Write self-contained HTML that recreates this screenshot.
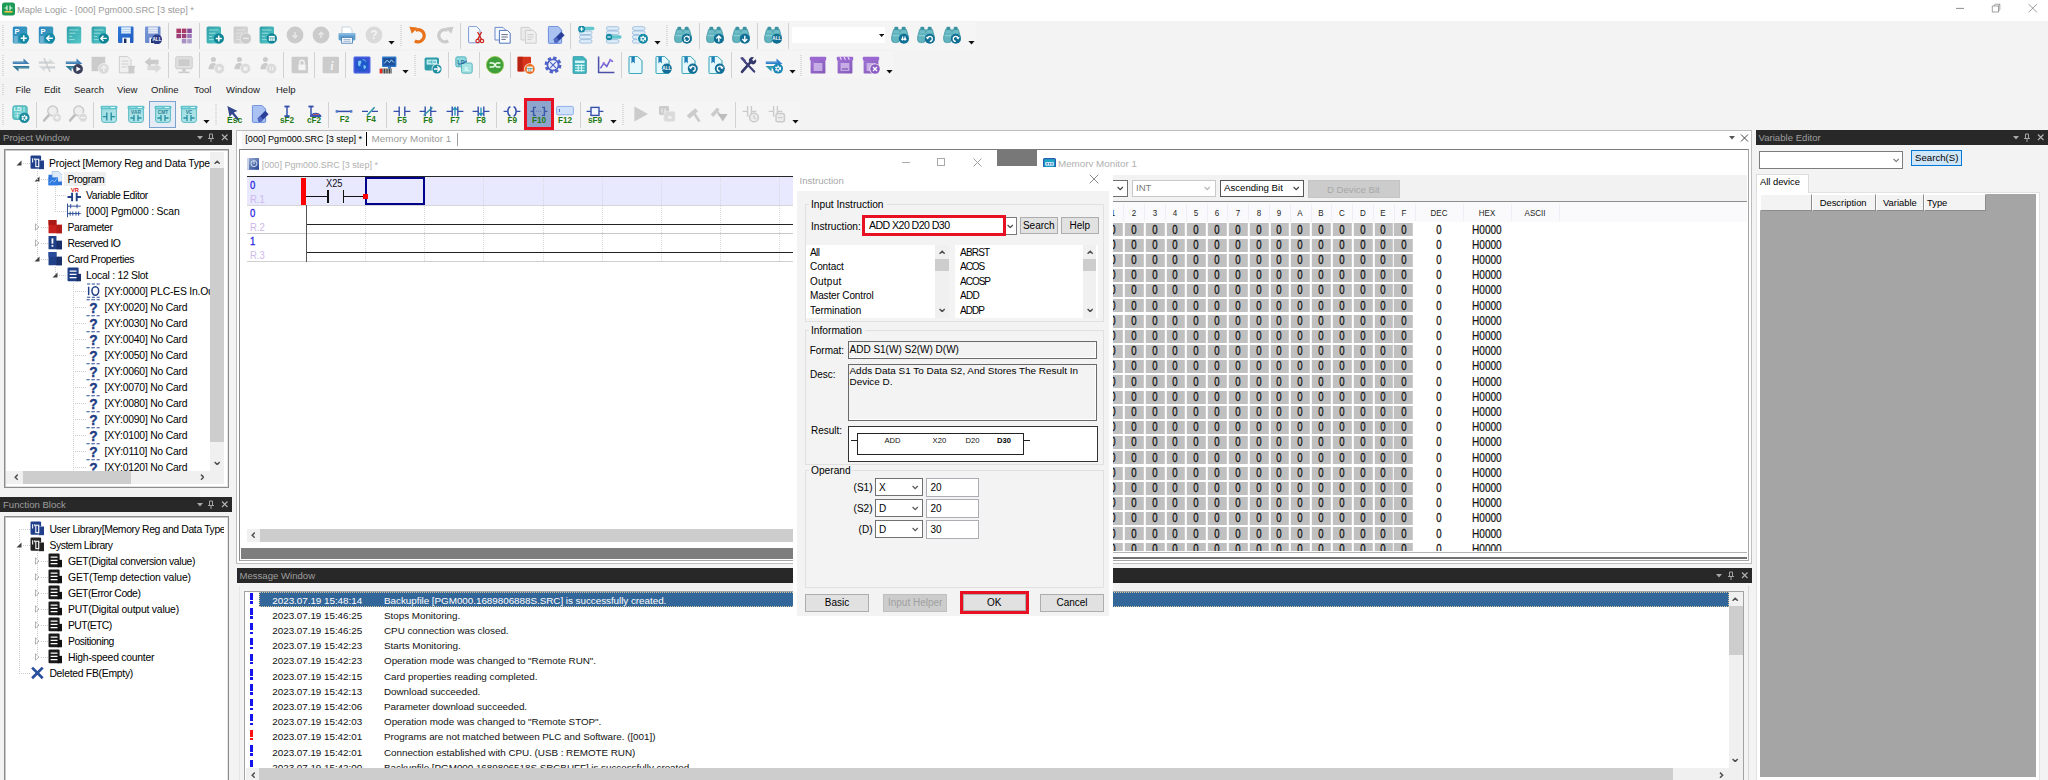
<!DOCTYPE html>
<html><head><meta charset="utf-8"><title>Maple Logic</title>
<style>
html,body{margin:0;padding:0}
body{width:2048px;height:780px;position:relative;overflow:hidden;background:#f3f3f3;font-family:"Liberation Sans",sans-serif;font-size:10px;color:#000}
div,span,svg{position:absolute;box-sizing:border-box}
span{white-space:pre}
.clip{overflow:hidden}
.hx{text-align:center;font-size:9.3px;line-height:14px;color:#1c1c1c;transform:scaleX(.86)}
.gz{width:20px;text-align:center;font-size:12px;line-height:14px;color:#111;transform:scaleX(.8);-webkit-text-stroke:.3px #111}
.gh{font-size:12px;line-height:14px;color:#111;transform:scaleX(.84);transform-origin:0 50%;-webkit-text-stroke:.2px #111}
</style></head><body>
<div style="left:0px;top:0px;width:2048px;height:20.8px;background:#fff"></div>
<svg style="left:2px;top:2px" width="13" height="14" viewBox="0 0 13 14"><rect x="0" y="0.5" width="13" height="13" rx="2.5" fill="#1d9a55"/><rect x="2.5" y="9" width="8" height="1.6" fill="#f2c14a"/><path d="M2.5 6h2.5M8 6h2.5M5 3.5v5M8 3.5v5" stroke="#e8fff0" stroke-width="1.1" fill="none"/></svg>
<span style="left:17px;top:3.2px;font-size:9.26px;color:#9a9a9a;line-height:14px;">Maple Logic - [000] Pgm000.SRC [3 step] *</span>
<svg style="left:1950px;top:0" width="98" height="20" viewBox="0 0 98 20"><path d="M6 8.4h8" stroke="#8e8e96" stroke-width="1"/><path d="M42.3 6h6.200v6h-6.200zM43.800 6l1.400-1.800h4.600v5.400l-1.300 1.600M48.500 6l1.300-1.800" stroke="#8a8a8a" stroke-width="0.8" fill="none"/><path d="M78.600 4.100l8.300 8.200M86.900 4.100l-8.300 8.200" stroke="#8a8a8a" stroke-width="0.85"/></svg>
<div style="left:0px;top:20.8px;width:2048px;height:109.2px;background:#f3f3f3"></div>
<div style="left:0px;top:22px;width:976px;height:27px;background:#f5f5f5"></div>
<div style="left:0px;top:51px;width:893px;height:27px;background:#f5f5f5"></div>
<div style="left:0px;top:101px;width:800px;height:28px;background:#f5f5f5"></div>
<span style="left:15.5px;top:83.3px;font-size:9.5px;color:#1a1a1a;line-height:14px;">File</span>
<span style="left:44px;top:83.3px;font-size:9.5px;color:#1a1a1a;line-height:14px;">Edit</span>
<span style="left:74px;top:83.3px;font-size:9.5px;color:#1a1a1a;line-height:14px;">Search</span>
<span style="left:117px;top:83.3px;font-size:9.5px;color:#1a1a1a;line-height:14px;">View</span>
<span style="left:151px;top:83.3px;font-size:9.5px;color:#1a1a1a;line-height:14px;">Online</span>
<span style="left:194px;top:83.3px;font-size:9.5px;color:#1a1a1a;line-height:14px;">Tool</span>
<span style="left:226px;top:83.3px;font-size:9.5px;color:#1a1a1a;line-height:14px;">Window</span>
<span style="left:276px;top:83.3px;font-size:9.5px;color:#1a1a1a;line-height:14px;">Help</span>
<div style="left:2.1px;top:84px;width:2.2px;height:12px;background:repeating-linear-gradient(to bottom,#dadada 0,#dadada 1px,transparent 1px,transparent 2px)"></div>
<div style="left:2.1px;top:25px;width:2.2px;height:22px;background:repeating-linear-gradient(to bottom,#dadada 0,#dadada 1px,transparent 1px,transparent 2px)"></div>
<div style="left:2.1px;top:55px;width:2.2px;height:22px;background:repeating-linear-gradient(to bottom,#dadada 0,#dadada 1px,transparent 1px,transparent 2px)"></div>
<div style="left:2.1px;top:104px;width:2.2px;height:22px;background:repeating-linear-gradient(to bottom,#dadada 0,#dadada 1px,transparent 1px,transparent 2px)"></div>
<div style="left:168px;top:22.8px;width:1px;height:26px;background:#d2d2d2"></div>
<div style="left:199px;top:22.8px;width:1px;height:26px;background:#d2d2d2"></div>
<div style="left:460px;top:22.8px;width:1px;height:26px;background:#d2d2d2"></div>
<div style="left:570px;top:22.8px;width:1px;height:26px;background:#d2d2d2"></div>
<div style="left:699px;top:22.8px;width:1px;height:26px;background:#d2d2d2"></div>
<div style="left:757px;top:22.8px;width:1px;height:26px;background:#d2d2d2"></div>
<div style="left:788px;top:22.8px;width:1px;height:26px;background:#d2d2d2"></div>
<div style="left:400.1px;top:25px;width:2.2px;height:22px;background:repeating-linear-gradient(to bottom,#dadada 0,#dadada 1px,transparent 1px,transparent 2px)"></div>
<div style="left:666.1px;top:25px;width:2.2px;height:22px;background:repeating-linear-gradient(to bottom,#dadada 0,#dadada 1px,transparent 1px,transparent 2px)"></div>
<svg style="left:388px;top:40.5px" width="7" height="4" viewBox="0 0 7 4"><path d="M0.400 0h6.200l-3.100 3.600z" fill="#111"/></svg>
<svg style="left:654px;top:40.5px" width="7" height="4" viewBox="0 0 7 4"><path d="M0.400 0h6.200l-3.100 3.600z" fill="#111"/></svg>
<svg style="left:968px;top:40.5px" width="7" height="4" viewBox="0 0 7 4"><path d="M0.400 0h6.200l-3.100 3.600z" fill="#111"/></svg>
<div style="left:792px;top:27px;width:93px;height:16px;background:#fff"></div>
<svg style="left:878.8px;top:33.6px" width="5.2" height="3" viewBox="0 0 5.2 3"><path d="M0 0h5.200l-2.600 3z" fill="#111"/></svg>
<div style="left:168px;top:51.8px;width:1px;height:26px;background:#d2d2d2"></div>
<div style="left:199px;top:51.8px;width:1px;height:26px;background:#d2d2d2"></div>
<div style="left:283px;top:51.8px;width:1px;height:26px;background:#d2d2d2"></div>
<div style="left:314px;top:51.8px;width:1px;height:26px;background:#d2d2d2"></div>
<div style="left:345px;top:51.8px;width:1px;height:26px;background:#d2d2d2"></div>
<div style="left:448px;top:51.8px;width:1px;height:26px;background:#d2d2d2"></div>
<div style="left:479px;top:51.8px;width:1px;height:26px;background:#d2d2d2"></div>
<div style="left:510px;top:51.8px;width:1px;height:26px;background:#d2d2d2"></div>
<div style="left:621px;top:51.8px;width:1px;height:26px;background:#d2d2d2"></div>
<div style="left:731px;top:51.8px;width:1px;height:26px;background:#d2d2d2"></div>
<div style="left:414.1px;top:55px;width:2.2px;height:22px;background:repeating-linear-gradient(to bottom,#dadada 0,#dadada 1px,transparent 1px,transparent 2px)"></div>
<div style="left:800.1px;top:55px;width:2.2px;height:22px;background:repeating-linear-gradient(to bottom,#dadada 0,#dadada 1px,transparent 1px,transparent 2px)"></div>
<svg style="left:402px;top:70.0px" width="7" height="4" viewBox="0 0 7 4"><path d="M0.400 0h6.200l-3.100 3.600z" fill="#111"/></svg>
<svg style="left:789px;top:70.0px" width="7" height="4" viewBox="0 0 7 4"><path d="M0.400 0h6.200l-3.100 3.600z" fill="#111"/></svg>
<svg style="left:886px;top:70.0px" width="7" height="4" viewBox="0 0 7 4"><path d="M0.400 0h6.200l-3.100 3.600z" fill="#111"/></svg>
<div style="left:36px;top:101.8px;width:1px;height:26px;background:#d2d2d2"></div>
<div style="left:93px;top:101.8px;width:1px;height:26px;background:#d2d2d2"></div>
<div style="left:328px;top:101.8px;width:1px;height:26px;background:#d2d2d2"></div>
<div style="left:386px;top:101.8px;width:1px;height:26px;background:#d2d2d2"></div>
<div style="left:496px;top:101.8px;width:1px;height:26px;background:#d2d2d2"></div>
<div style="left:580px;top:101.8px;width:1px;height:26px;background:#d2d2d2"></div>
<div style="left:735px;top:101.8px;width:1px;height:26px;background:#d2d2d2"></div>
<div style="left:215.1px;top:104px;width:2.2px;height:22px;background:repeating-linear-gradient(to bottom,#dadada 0,#dadada 1px,transparent 1px,transparent 2px)"></div>
<div style="left:622.1px;top:104px;width:2.2px;height:22px;background:repeating-linear-gradient(to bottom,#dadada 0,#dadada 1px,transparent 1px,transparent 2px)"></div>
<svg style="left:203px;top:120.0px" width="7" height="4" viewBox="0 0 7 4"><path d="M0.400 0h6.200l-3.100 3.600z" fill="#111"/></svg>
<svg style="left:610px;top:120.0px" width="7" height="4" viewBox="0 0 7 4"><path d="M0.400 0h6.200l-3.100 3.600z" fill="#111"/></svg>
<svg style="left:792px;top:120.0px" width="7" height="4" viewBox="0 0 7 4"><path d="M0.400 0h6.200l-3.100 3.600z" fill="#111"/></svg>
<div style="left:149px;top:101px;width:27px;height:27px;background:#e6ecf6;border:1px solid #7da2ce"></div>
<div style="left:524px;top:98px;width:30px;height:32px;background:#8ea6cc;border:3px solid #e81123"></div>
<svg style="left:12.0px;top:26.3px" width="18" height="18" viewBox="0 0 18 18"><defs><linearGradient id="g1" x1="0" y1="0" x2="1" y2="1"><stop offset="0" stop-color="#2a86c4"/><stop offset="1" stop-color="#3fa6b8"/></linearGradient></defs><rect x="0.8" y="0.4" width="14.4" height="17.2" rx="1.6" fill="url(#g1)"/><rect x="1.8" y="10" width="4" height="7" fill="#8fc4e0" opacity=".6"/><text x="2.6" y="8" font-size="7.5" font-weight="bold" fill="#fff" font-family="Liberation Sans,sans-serif">P</text><circle cx="11.8" cy="12.2" r="5.3" fill="#158aa6"/><path d="M8.8 12.2h6M11.8 9.2v6" stroke="#fff" stroke-width="1.5"/></svg>
<svg style="left:38.0px;top:26.3px" width="18" height="18" viewBox="0 0 18 18"><defs><linearGradient id="g2" x1="0" y1="0" x2="1" y2="1"><stop offset="0" stop-color="#2a86c4"/><stop offset="1" stop-color="#3fa6b8"/></linearGradient></defs><rect x="0.8" y="0.4" width="14.4" height="17.2" rx="1.6" fill="url(#g2)"/><rect x="1.8" y="10" width="4" height="7" fill="#8fc4e0" opacity=".6"/><text x="2.6" y="8" font-size="7.5" font-weight="bold" fill="#fff" font-family="Liberation Sans,sans-serif">P</text><circle cx="11.8" cy="12.2" r="5.3" fill="#158aa6"/><path d="M14.8 12.2h-5.5M11.5 9.5l-2.7 2.7l2.7 2.7" stroke="#fff" stroke-width="1.4" fill="none"/></svg>
<svg style="left:64.5px;top:26.3px" width="18" height="18" viewBox="0 0 18 18"><defs><linearGradient id="g3" x1="0" y1="0" x2="1" y2="1"><stop offset="0" stop-color="#2fa0a8"/><stop offset="1" stop-color="#55c8c8"/></linearGradient></defs><rect x="1.8" y="0.4" width="14.4" height="17.2" rx="1.6" fill="url(#g3)"/><path d="M4.2 4.0h9.4M4.2 7.2h6.4M4.2 10.4h3M4.2 13.6h5.4" stroke="#9ee4e4" stroke-width="1" opacity=".9"/></svg>
<svg style="left:90.5px;top:26.3px" width="18" height="18" viewBox="0 0 18 18"><defs><linearGradient id="g4" x1="0" y1="0" x2="1" y2="1"><stop offset="0" stop-color="#2fa0a8"/><stop offset="1" stop-color="#55c8c8"/></linearGradient></defs><rect x="0.6" y="0.4" width="14.4" height="17.2" rx="1.6" fill="url(#g4)"/><path d="M3.0 4.0h9.4M3.0 7.2h6.4M3.0 10.4h3M3.0 13.6h5.4" stroke="#9ee4e4" stroke-width="1" opacity=".9"/><circle cx="12.8" cy="12.4" r="5.2" fill="#0f8496"/><path d="M15.8 12.4h-5.5M12.5 9.7l-2.7 2.7l2.7 2.7" stroke="#fff" stroke-width="1.4" fill="none"/></svg>
<svg style="left:117.3px;top:26.3px" width="18" height="18" viewBox="0 0 18 18"><defs><linearGradient id="g5" x1="0" y1="0" x2="1" y2="1"><stop offset="0" stop-color="#2f78d8"/><stop offset="1" stop-color="#1f5cc0"/></linearGradient></defs><path d="M1 1.5a1 1 0 0 1 1-1h13.5a1 1 0 0 1 1 1v14.5a1 1 0 0 1-1 1h-13.5a1 1 0 0 1-1-1z" fill="url(#g5)"/><rect x="4.2" y="0.5" width="9.6" height="7.2" fill="#b8d4f0"/><path d="M4.2 2.5h9.6M4.2 4.5h9.6M4.2 6.3h9.6" stroke="#fff" stroke-width=".7" opacity=".8"/><rect x="5.4" y="11.6" width="7.6" height="5.4" fill="#f4f8ff"/><rect x="7" y="12.6" width="2.4" height="4.4" fill="#1a2a5a"/></svg>
<svg style="left:144.0px;top:26.3px" width="18" height="18" viewBox="0 0 18 18"><defs><linearGradient id="g6" x1="0" y1="0" x2="1" y2="1"><stop offset="0" stop-color="#7a98d8"/><stop offset="1" stop-color="#5f80c4"/></linearGradient></defs><path d="M1 1.5a1 1 0 0 1 1-1h13.5a1 1 0 0 1 1 1v14.5a1 1 0 0 1-1 1h-13.5a1 1 0 0 1-1-1z" fill="url(#g6)"/><rect x="4.2" y="0.5" width="9.6" height="7.2" fill="#c8d4ea"/><path d="M4.2 2.5h9.6M4.2 4.5h9.6M4.2 6.3h9.6" stroke="#fff" stroke-width=".7" opacity=".8"/><rect x="5.4" y="11.6" width="7.6" height="5.4" fill="#f4f8ff"/><rect x="7" y="12.6" width="2.4" height="4.4" fill="#1a2a5a"/><circle cx="13" cy="13.4" r="5" fill="#2a3c88"/><text x="13" y="15.0" font-size="4.6" font-weight="bold" text-anchor="middle" fill="#fff" font-family="Liberation Sans,sans-serif">ALL</text></svg>
<svg style="left:175.0px;top:26.3px" width="18" height="18" viewBox="0 0 18 18"><rect x="1.4" y="2.6" width="4.600" height="4.400" fill="#a83a68"/><rect x="6.800000000000001" y="2.6" width="4.600" height="4.400" fill="#a83a68"/><rect x="12.200000000000001" y="2.6" width="4.600" height="4.400" fill="#8a4f9c"/><rect x="1.4" y="7.800000000000001" width="4.600" height="4.400" fill="#9c3f78"/><rect x="6.800000000000001" y="7.800000000000001" width="4.600" height="4.400" fill="#9c3f78"/><rect x="12.200000000000001" y="7.800000000000001" width="4.600" height="4.400" fill="#9a78b8"/><rect x="6.800000000000001" y="13.0" width="4.600" height="4.400" fill="#a890c4"/><rect x="12.200000000000001" y="13.0" width="4.600" height="4.400" fill="#b0a4cc"/></svg>
<svg style="left:206.0px;top:26.3px" width="18" height="18" viewBox="0 0 18 18"><defs><linearGradient id="g7" x1="0" y1="0" x2="1" y2="1"><stop offset="0" stop-color="#2fa0a8"/><stop offset="1" stop-color="#55c8c8"/></linearGradient></defs><rect x="0.6" y="0.4" width="14.4" height="17.2" rx="1.6" fill="url(#g7)"/><path d="M3.0 4.0h9.4M3.0 7.2h6.4M3.0 10.4h3M3.0 13.6h5.4" stroke="#9ee4e4" stroke-width="1" opacity=".9"/><circle cx="12.8" cy="12.4" r="5.2" fill="#0f8496"/><path d="M9.8 12.4h6M12.8 9.4v6" stroke="#fff" stroke-width="1.5"/></svg>
<svg style="left:232.5px;top:26.3px" width="18" height="18" viewBox="0 0 18 18"><defs><linearGradient id="g8" x1="0" y1="0" x2="1" y2="1"><stop offset="0" stop-color="#cbcbcb"/><stop offset="1" stop-color="#dadada"/></linearGradient></defs><rect x="0.6" y="0.4" width="14.4" height="17.2" rx="1.6" fill="url(#g8)"/><path d="M3.0 4.0h9.4M3.0 7.2h6.4M3.0 10.4h3M3.0 13.6h5.4" stroke="#e4e4e4" stroke-width="1" opacity=".9"/><circle cx="12.8" cy="12.4" r="6.0" fill="#e8e8e8"/><circle cx="12.8" cy="12.4" r="5.2" fill="#cbcbcb"/><path d="M9.8 12.4h6" stroke="#ececec" stroke-width="1.5"/></svg>
<svg style="left:258.5px;top:26.3px" width="18" height="18" viewBox="0 0 18 18"><defs><linearGradient id="g9" x1="0" y1="0" x2="1" y2="1"><stop offset="0" stop-color="#2fa0a8"/><stop offset="1" stop-color="#55c8c8"/></linearGradient></defs><rect x="0.6" y="0.4" width="14.4" height="17.2" rx="1.6" fill="url(#g9)"/><path d="M3.0 4.0h9.4M3.0 7.2h6.4M3.0 10.4h3M3.0 13.6h5.4" stroke="#9ee4e4" stroke-width="1" opacity=".9"/><circle cx="12.8" cy="12.4" r="5.2" fill="#0f8496"/><rect x="9.8" y="9.9" width="6" height="5" fill="#fff"/><path d="M9.8 11.8h6M11.8 11.8v3.1M13.8 11.8v3.1" stroke="#12849a" stroke-width="0.6"/></svg>
<svg style="left:285.5px;top:26.3px" width="18" height="18" viewBox="0 0 18 18"><circle cx="9" cy="9" r="8.400" fill="#cbcbcb"/><path d="M9 6v5.5M6.5 9.3l2.5 2.5l2.5 -2.5" stroke="#e8e8e8" stroke-width="1.4" fill="none"/></svg>
<svg style="left:311.5px;top:26.3px" width="18" height="18" viewBox="0 0 18 18"><circle cx="9" cy="9" r="8.400" fill="#cbcbcb"/><path d="M9 12v-5.5M6.5 8.7l2.5 -2.5l2.5 2.5" stroke="#e8e8e8" stroke-width="1.4" fill="none"/></svg>
<svg style="left:338.0px;top:26.3px" width="18" height="18" viewBox="0 0 18 18"><path d="M4 1h7.600l2.400 2.400v4.600h-10z" fill="#fff" stroke="#9fb8d4" stroke-width=".6"/><rect x="0.600" y="7" width="16.800" height="7.400" rx="1.400" fill="#5f9fd0"/><rect x="0.600" y="7" width="16.800" height="2.200" rx="1" fill="#86b8e0"/><rect x="3.600" y="11.400" width="10.800" height="5.800" fill="#f4f8fc" stroke="#3f78b0" stroke-width=".8"/><path d="M5.400 13.600h7.200M5.400 15.300h7.200" stroke="#7a9cc0" stroke-width=".7"/></svg>
<svg style="left:364.5px;top:26.3px" width="18" height="18" viewBox="0 0 18 18"><circle cx="9" cy="9" r="8.400" fill="#dadada"/><text x="9" y="13.400" font-size="12" font-weight="bold" text-anchor="middle" fill="#f4f4f4" font-family="Liberation Sans,sans-serif">?</text></svg>
<svg style="left:409.0px;top:26.3px" width="18" height="18" viewBox="0 0 18 18"><path d="M6.400 4.200a6.100 6.100 0 1 1 -0.600 10.600" stroke="#e8731c" stroke-width="3.200" fill="none"/><path d="M0.400 0.800l7.800 0.600l-2.400 3l-3 3.400z" fill="#e8731c"/></svg>
<svg style="left:435.5px;top:26.3px" width="18" height="18" viewBox="0 0 18 18"><path d="M11.600 4.200a6.100 6.100 0 1 0 0.600 10.600" stroke="#cbcbcb" stroke-width="3.200" fill="none"/><path d="M17.600 0.800l-7.800 0.600l2.400 3l3 3.400z" fill="#cbcbcb"/></svg>
<svg style="left:467.0px;top:26.3px" width="18" height="18" viewBox="0 0 18 18"><path d="M1.600 1.200a0.800 0.800 0 0 1 0.800-0.800h7l3.600 3.600v12a0.800 0.800 0 0 1-0.800 0.800h-9.800a0.800 0.800 0 0 1-0.800-0.800z" fill="#f4f8ff" stroke="#6f8fd0" stroke-width=".9"/><path d="M10.600 6l4 7.600M14.600 6l-4 7.600" stroke="#d0281c" stroke-width="1.300"/><circle cx="10.600" cy="15" r="1.700" fill="none" stroke="#d0281c" stroke-width="1.200"/><circle cx="15" cy="15" r="1.700" fill="none" stroke="#d0281c" stroke-width="1.200"/></svg>
<svg style="left:494.0px;top:26.3px" width="18" height="18" viewBox="0 0 18 18"><path d="M1 1.400h8l2 2v10.600h-10z" fill="#f4f8ff" stroke="#5f80c8" stroke-width=".9"/><path d="M5.400 4.400h8l2.800 2.800v10h-10.800z" fill="#fbfdff" stroke="#3f68b8" stroke-width=".9"/><path d="M7.400 8.600h6.400M7.400 11h6.400M7.400 13.400h4.400" stroke="#555f78" stroke-width=".9"/></svg>
<svg style="left:520.0px;top:26.3px" width="18" height="18" viewBox="0 0 18 18"><path d="M1 1.400h8l2 2v10.600h-10z" fill="#ececec" stroke="#cbcbcb" stroke-width=".9"/><path d="M5.400 4.400h8l2.800 2.800v10h-10.800z" fill="#efefef" stroke="#cbcbcb" stroke-width=".9"/><path d="M7.400 8.600h6.400M7.400 11h6.400M7.400 13.400h4.400" stroke="#cbcbcb" stroke-width=".9"/></svg>
<svg style="left:546.5px;top:26.3px" width="18" height="18" viewBox="0 0 18 18"><path d="M1.400 1.200a0.800 0.800 0 0 1 0.800-0.800h8.800l3.600 3.600v12.600a0.800 0.800 0 0 1-0.800 0.800h-11.600a0.800 0.800 0 0 1-0.800-0.800z" fill="#a9c2f2" stroke="#5f84dc" stroke-width=".9"/><path d="M6.600 13.400l7.600-7.600l3.400 3.400l-7.600 7.600h-2.200z" fill="#2a3f9a"/><path d="M6.600 13.400l2.400-2.400l3.400 3.400l-2.400 2.400h-2.200z" fill="#4f68c4"/></svg>
<svg style="left:577.0px;top:26.3px" width="18" height="18" viewBox="0 0 18 18"><rect x="2.400" y="5.0" width="12.600" height="3.500" rx="1.700" fill="#dcecf8" stroke="#8ab0d8" stroke-width=".7"/><rect x="2.400" y="9.3" width="12.600" height="3.500" rx="1.700" fill="#dcecf8" stroke="#8ab0d8" stroke-width=".7"/><rect x="2.400" y="13.6" width="12.600" height="3.500" rx="1.700" fill="#dcecf8" stroke="#8ab0d8" stroke-width=".7"/><rect x="5" y="0.700" width="12.400" height="3.500" rx="1.700" fill="#62c6ce"/><circle cx="4.600" cy="3" r="3.500" fill="#148aa4"/><path d="M2.600 3h4M4.600 1v4" stroke="#fff" stroke-width="1.100"/></svg>
<svg style="left:603.5px;top:26.3px" width="18" height="18" viewBox="0 0 18 18"><rect x="2.400" y="0.7" width="12.600" height="3.500" rx="1.700" fill="#dcecf8" stroke="#8ab0d8" stroke-width=".7"/><rect x="2.400" y="5.0" width="12.600" height="3.500" rx="1.700" fill="#dcecf8" stroke="#8ab0d8" stroke-width=".7"/><rect x="2.400" y="13.6" width="12.600" height="3.500" rx="1.700" fill="#dcecf8" stroke="#8ab0d8" stroke-width=".7"/><rect x="4" y="9.300" width="13.600" height="3.500" rx="1.700" fill="#62c6ce"/><circle cx="5" cy="11" r="3.200" fill="#148aa4"/><path d="M3.300 11h3.400" stroke="#fff" stroke-width="1.100"/></svg>
<svg style="left:630.0px;top:26.3px" width="18" height="18" viewBox="0 0 18 18"><rect x="2.400" y="0.7" width="12.600" height="3.500" rx="1.700" fill="#dcecf8" stroke="#8ab0d8" stroke-width=".7"/><rect x="2.400" y="5.0" width="12.600" height="3.500" rx="1.700" fill="#dcecf8" stroke="#8ab0d8" stroke-width=".7"/><rect x="2.400" y="9.3" width="12.600" height="3.500" rx="1.700" fill="#dcecf8" stroke="#8ab0d8" stroke-width=".7"/><rect x="2.400" y="13.6" width="12.600" height="3.500" rx="1.700" fill="#dcecf8" stroke="#8ab0d8" stroke-width=".7"/><circle cx="13" cy="12.8" r="5.8" fill="#f3f3f3"/><circle cx="13" cy="12.8" r="5" fill="#158aa6"/><circle cx="13" cy="12.8" r="2.3" fill="none" stroke="#fff" stroke-width="1.5" stroke-dasharray="1.4 0.9"/><circle cx="13" cy="12.8" r="1.5" fill="none" stroke="#fff" stroke-width="1"/></svg>
<svg style="left:674.0px;top:26.3px" width="18" height="18" viewBox="0 0 18 18"><rect x="3.300" y="0.800" width="4" height="3.400" rx="1.200" fill="#3a92a2"/><rect x="10.700" y="0.800" width="4" height="3.400" rx="1.200" fill="#3a92a2"/><path d="M2.600 3.400h5.600l1 2h-0.400l1-2h5.600l2 7.400v2.600a3.200 3.200 0 0 1-3.200 3.200h-1.600a3.200 3.200 0 0 1-3.200-3.200v-1.400h-0.800v1.400a3.200 3.200 0 0 1-3.200 3.200h-1.600a3.200 3.200 0 0 1-3.200-3.200v-2.600z" fill="#62b4be" stroke="#3a92a2" stroke-width=".7"/><path d="M1.600 9.600h6.400M10 9.600h6.400" stroke="#8fd4da" stroke-width="1.200" opacity=".8"/><path d="M3 6h4.600M10.400 6h4.600" stroke="#8fd4da" stroke-width=".9" opacity=".7"/><circle cx="12.8" cy="12.8" r="5" fill="#106f94"/><path d="M10.200000000000001 13.4a2.6 2.6 0 0 1 4.6-2.2M15.4 12.200000000000001a2.6 2.6 0 0 1 -4.6 2.2" stroke="#fff" stroke-width="1.1" fill="none"/><path d="M15.600000000000001 9.600000000000001v2.4h-2.4zM10.0 16.0v-2.4h2.4z" fill="#fff"/></svg>
<svg style="left:706.0px;top:26.3px" width="18" height="18" viewBox="0 0 18 18"><rect x="3.300" y="0.800" width="4" height="3.400" rx="1.200" fill="#3a92a2"/><rect x="10.700" y="0.800" width="4" height="3.400" rx="1.200" fill="#3a92a2"/><path d="M2.600 3.400h5.600l1 2h-0.400l1-2h5.600l2 7.400v2.600a3.200 3.200 0 0 1-3.200 3.200h-1.600a3.200 3.200 0 0 1-3.200-3.200v-1.400h-0.800v1.400a3.200 3.200 0 0 1-3.200 3.200h-1.600a3.200 3.200 0 0 1-3.200-3.200v-2.600z" fill="#62b4be" stroke="#3a92a2" stroke-width=".7"/><path d="M1.600 9.600h6.400M10 9.600h6.400" stroke="#8fd4da" stroke-width="1.200" opacity=".8"/><path d="M3 6h4.600M10.400 6h4.600" stroke="#8fd4da" stroke-width=".9" opacity=".7"/><circle cx="12.8" cy="12.8" r="5" fill="#106f94"/><path d="M12.8 15.8v-5.5M10.3 12.5l2.5 -2.5l2.5 2.5" stroke="#fff" stroke-width="1.4" fill="none"/></svg>
<svg style="left:732.0px;top:26.3px" width="18" height="18" viewBox="0 0 18 18"><rect x="3.300" y="0.800" width="4" height="3.400" rx="1.200" fill="#3a92a2"/><rect x="10.700" y="0.800" width="4" height="3.400" rx="1.200" fill="#3a92a2"/><path d="M2.600 3.400h5.600l1 2h-0.400l1-2h5.600l2 7.400v2.600a3.200 3.200 0 0 1-3.200 3.200h-1.600a3.200 3.200 0 0 1-3.200-3.200v-1.400h-0.800v1.400a3.200 3.200 0 0 1-3.200 3.200h-1.600a3.200 3.200 0 0 1-3.200-3.200v-2.600z" fill="#62b4be" stroke="#3a92a2" stroke-width=".7"/><path d="M1.600 9.600h6.400M10 9.600h6.400" stroke="#8fd4da" stroke-width="1.200" opacity=".8"/><path d="M3 6h4.600M10.400 6h4.600" stroke="#8fd4da" stroke-width=".9" opacity=".7"/><circle cx="12.8" cy="12.8" r="5" fill="#106f94"/><path d="M12.8 9.8v5.5M10.3 13.100000000000001l2.5 2.5l2.5 -2.5" stroke="#fff" stroke-width="1.4" fill="none"/></svg>
<svg style="left:764.0px;top:26.3px" width="18" height="18" viewBox="0 0 18 18"><rect x="3.300" y="0.800" width="4" height="3.400" rx="1.200" fill="#3a92a2"/><rect x="10.700" y="0.800" width="4" height="3.400" rx="1.200" fill="#3a92a2"/><path d="M2.600 3.400h5.600l1 2h-0.400l1-2h5.600l2 7.400v2.600a3.200 3.200 0 0 1-3.200 3.200h-1.600a3.200 3.200 0 0 1-3.200-3.200v-1.400h-0.800v1.400a3.200 3.200 0 0 1-3.200 3.200h-1.600a3.200 3.200 0 0 1-3.200-3.200v-2.600z" fill="#62b4be" stroke="#3a92a2" stroke-width=".7"/><path d="M1.600 9.600h6.400M10 9.600h6.400" stroke="#8fd4da" stroke-width="1.200" opacity=".8"/><path d="M3 6h4.600M10.400 6h4.600" stroke="#8fd4da" stroke-width=".9" opacity=".7"/><circle cx="12.8" cy="12.8" r="5" fill="#106f94"/><text x="12.8" y="14.4" font-size="4.6" font-weight="bold" text-anchor="middle" fill="#fff" font-family="Liberation Sans,sans-serif">ALL</text></svg>
<svg style="left:891.0px;top:26.3px" width="18" height="18" viewBox="0 0 18 18"><rect x="3.300" y="0.800" width="4" height="3.400" rx="1.200" fill="#3a92a2"/><rect x="10.700" y="0.800" width="4" height="3.400" rx="1.200" fill="#3a92a2"/><path d="M2.600 3.400h5.600l1 2h-0.400l1-2h5.600l2 7.400v2.600a3.200 3.200 0 0 1-3.200 3.200h-1.600a3.200 3.200 0 0 1-3.200-3.200v-1.400h-0.800v1.400a3.200 3.200 0 0 1-3.200 3.200h-1.600a3.200 3.200 0 0 1-3.200-3.200v-2.600z" fill="#62b4be" stroke="#3a92a2" stroke-width=".7"/><path d="M1.600 9.600h6.400M10 9.600h6.400" stroke="#8fd4da" stroke-width="1.200" opacity=".8"/><path d="M3 6h4.600M10.400 6h4.600" stroke="#8fd4da" stroke-width=".9" opacity=".7"/><circle cx="12.8" cy="12.8" r="5" fill="#106f94"/><circle cx="11.5" cy="13.3" r="1.2" fill="#fff"/><circle cx="14.100000000000001" cy="13.3" r="1.2" fill="#fff"/><rect x="11.0" y="10.4" width="1.2" height="2.4" fill="#fff"/><rect x="13.4" y="10.4" width="1.2" height="2.4" fill="#fff"/></svg>
<svg style="left:917.0px;top:26.3px" width="18" height="18" viewBox="0 0 18 18"><rect x="3.300" y="0.800" width="4" height="3.400" rx="1.200" fill="#3a92a2"/><rect x="10.700" y="0.800" width="4" height="3.400" rx="1.200" fill="#3a92a2"/><path d="M2.600 3.400h5.600l1 2h-0.400l1-2h5.600l2 7.400v2.600a3.200 3.200 0 0 1-3.200 3.200h-1.600a3.200 3.200 0 0 1-3.200-3.200v-1.400h-0.800v1.400a3.200 3.200 0 0 1-3.200 3.200h-1.600a3.200 3.200 0 0 1-3.200-3.200v-2.600z" fill="#62b4be" stroke="#3a92a2" stroke-width=".7"/><path d="M1.600 9.600h6.400M10 9.600h6.400" stroke="#8fd4da" stroke-width="1.200" opacity=".8"/><path d="M3 6h4.600M10.400 6h4.600" stroke="#8fd4da" stroke-width=".9" opacity=".7"/><circle cx="12.8" cy="12.8" r="5" fill="#106f94"/><path d="M10.4 12.3a2.5 2.5 0 1 1 2.4 3.1" stroke="#fff" stroke-width="1.2" fill="none"/><path d="M8.8 10.8l1.6 2.6l2.2-1.8z" fill="#fff"/></svg>
<svg style="left:943.0px;top:26.3px" width="18" height="18" viewBox="0 0 18 18"><rect x="3.300" y="0.800" width="4" height="3.400" rx="1.200" fill="#3a92a2"/><rect x="10.700" y="0.800" width="4" height="3.400" rx="1.200" fill="#3a92a2"/><path d="M2.600 3.400h5.600l1 2h-0.400l1-2h5.600l2 7.400v2.600a3.200 3.200 0 0 1-3.200 3.200h-1.600a3.200 3.200 0 0 1-3.200-3.200v-1.400h-0.800v1.400a3.200 3.200 0 0 1-3.200 3.200h-1.600a3.200 3.200 0 0 1-3.200-3.200v-2.600z" fill="#62b4be" stroke="#3a92a2" stroke-width=".7"/><path d="M1.600 9.600h6.400M10 9.600h6.400" stroke="#8fd4da" stroke-width="1.200" opacity=".8"/><path d="M3 6h4.600M10.400 6h4.600" stroke="#8fd4da" stroke-width=".9" opacity=".7"/><circle cx="12.8" cy="12.8" r="5" fill="#106f94"/><path d="M15.200000000000001 12.3a2.5 2.5 0 1 0 -2.4 3.1" stroke="#fff" stroke-width="1.2" fill="none"/><path d="M16.8 10.8l-1.6 2.6l-2.2-1.8z" fill="#fff"/></svg>
<svg style="left:12.0px;top:55.8px" width="18" height="18" viewBox="0 0 18 18"><path d="M0.800 5.400h10.700v-3l6 5.600h-16.700z" fill="#3f7fb4"/><path d="M17.200 12.600h-10.700v3l-6-5.600h16.700z" fill="#2f7898"/><path d="M0.800 6.200h12M17.200 11.800h-12" stroke="#9fc8dc" stroke-width=".6" opacity=".7"/></svg>
<svg style="left:38.0px;top:55.8px" width="18" height="18" viewBox="0 0 18 18"><path d="M0.800 5.400h10.700v-3l6 5.600h-16.700z" fill="#dadada"/><path d="M17.200 12.600h-10.700v3l-6-5.600h16.700z" fill="#dadada"/><path d="M0.800 6.200h12M17.200 11.800h-12" stroke="#9fc8dc" stroke-width=".6" opacity=".7"/><path d="M6 2l6 14" stroke="#cbcbcb" stroke-width="1.400"/></svg>
<svg style="left:65.0px;top:55.8px" width="18" height="18" viewBox="0 0 18 18"><path d="M0.800 5.400h10.700v-3l6 5.600h-16.700z" fill="#3f7fb4"/><path d="M12 12.600h-5.500v3l-6-5.600h11.500z" fill="#2f7898"/><path d="M0.800 6.200h12M17.200 11.800h-12" stroke="#9fc8dc" stroke-width=".6" opacity=".7"/><circle cx="13" cy="13" r="4.9" fill="#3a3f5c"/><path d="M11.4 10.4l4.4 2.6l-4.4 2.6z" fill="#fff"/></svg>
<svg style="left:91.0px;top:55.8px" width="18" height="18" viewBox="0 0 18 18"><rect x="0.600" y="0.800" width="13.600" height="14.400" fill="#cbcbcb"/><circle cx="12.8" cy="12.8" r="5.7" fill="#f0f0f0"/><circle cx="12.8" cy="12.8" r="4.9" fill="#dadada"/><path d="M12.8 15.8v-5.5M10.3 12.5l2.5 -2.5l2.5 2.5" stroke="#f0f0f0" stroke-width="1.4" fill="none"/></svg>
<svg style="left:117.5px;top:55.8px" width="18" height="18" viewBox="0 0 18 18"><path d="M1.400 0.600h8.400l3.200 3.200v13h-11.600z" fill="#f0f0f0" stroke="#cbcbcb" stroke-width=".9"/><path d="M3.400 5h7M3.400 8h7M3.400 11h5" stroke="#cbcbcb" stroke-width=".9"/><rect x="10.400" y="11" width="6" height="6.400" fill="#cbcbcb"/><rect x="9.600" y="9.800" width="7.600" height="1.400" fill="#cbcbcb"/></svg>
<svg style="left:144.0px;top:55.8px" width="18" height="18" viewBox="0 0 18 18"><path d="M0.600 6l6-5v2.800h8v4.400h-8v2.800z" fill="#cbcbcb"/><path d="M17.400 12l-6 5v-2.800h-8v-4.400h8v-2.800z" fill="#dadada"/></svg>
<svg style="left:175.0px;top:55.8px" width="18" height="18" viewBox="0 0 18 18"><rect x="0.800" y="0.800" width="16.400" height="12" rx="1" fill="#e0e0e0" stroke="#cbcbcb" stroke-width="1"/><rect x="3.400" y="3.200" width="11.200" height="6.800" fill="#cbcbcb"/><rect x="7.400" y="12.800" width="3.200" height="3" fill="#cbcbcb"/><rect x="3.400" y="15.600" width="11.200" height="1.600" fill="#cbcbcb"/></svg>
<svg style="left:207.0px;top:55.8px" width="18" height="18" viewBox="0 0 18 18"><circle cx="6.4" cy="3.4" r="2.500" fill="#cbcbcb"/><path d="M1.400 13.200c0.200-4 2.200-6.200 5-6.200s4.800 2.200 5 6.200z" fill="#cbcbcb"/><circle cx="12.4" cy="12.6" r="5.6" fill="#f2f2f2"/><circle cx="12.4" cy="12.6" r="4.8" fill="#dadada"/><path d="M10.8 10.0l4.4 2.6l-4.4 2.6z" fill="#f2f2f2"/></svg>
<svg style="left:233.0px;top:55.8px" width="18" height="18" viewBox="0 0 18 18"><circle cx="6.4" cy="3.4" r="2.500" fill="#cbcbcb"/><path d="M1.400 13.200c0.200-4 2.200-6.200 5-6.200s4.800 2.200 5 6.200z" fill="#cbcbcb"/><circle cx="12.4" cy="12.6" r="5.6" fill="#f2f2f2"/><circle cx="12.4" cy="12.6" r="4.8" fill="#dadada"/><rect x="10.4" y="10.6" width="4" height="4" fill="#f2f2f2"/></svg>
<svg style="left:259.0px;top:55.8px" width="18" height="18" viewBox="0 0 18 18"><circle cx="6.4" cy="3.4" r="2.500" fill="#cbcbcb"/><path d="M1.400 13.200c0.200-4 2.200-6.200 5-6.200s4.800 2.200 5 6.200z" fill="#cbcbcb"/><circle cx="12.4" cy="12.6" r="5.6" fill="#f2f2f2"/><circle cx="12.4" cy="12.6" r="4.8" fill="#dadada"/><path d="M11.1 10.6v4M13.700000000000001 10.6v4" stroke="#f2f2f2" stroke-width="1.2"/></svg>
<svg style="left:290.5px;top:55.8px" width="18" height="18" viewBox="0 0 18 18"><rect x="0.600" y="0.800" width="16.400" height="16.400" rx="1" fill="#cbcbcb"/><rect x="7.400" y="8.400" width="7.200" height="5.800" fill="#f4f4f4"/><path d="M8.800 8.400v-2a2.200 2.200 0 0 1 4.400 0v2" stroke="#f4f4f4" stroke-width="1.300" fill="none"/></svg>
<svg style="left:321.5px;top:55.8px" width="18" height="18" viewBox="0 0 18 18"><rect x="0.600" y="0.800" width="16.400" height="16.400" rx="1" fill="#cbcbcb"/><text x="10" y="14" font-size="12" font-weight="bold" font-style="italic" text-anchor="middle" fill="#f4f4f4" font-family="Liberation Serif,serif">i</text></svg>
<svg style="left:352.5px;top:55.8px" width="18" height="18" viewBox="0 0 18 18"><rect x="0.800" y="0.800" width="16.400" height="16.400" rx="1" fill="#3c50d6"/><rect x="0.800" y="0.800" width="16.400" height="16.400" rx="1" fill="none" stroke="#6f8ff0" stroke-width=".8"/><circle cx="9" cy="9" r="6.600" fill="#1f58cc"/><path d="M5 5.400c1.600-1.400 3-1 3.400 0.400s-1.400 2-1 3.600s-1.600 1-2.400-0.400zM10.400 9.600c1.200-0.600 2.600 0 2.600 1.400s-1.400 2.400-2.400 1.600z" fill="#7cc4f2"/><path d="M9.600 3.600c1.400 0 2.800 0.800 3.400 2" stroke="#9ad4f8" stroke-width=".9" fill="none"/></svg>
<svg style="left:379.0px;top:55.8px" width="18" height="18" viewBox="0 0 18 18"><rect x="3" y="0.600" width="14.400" height="10.400" rx="1" fill="#2f78c8"/><rect x="4.400" y="2" width="11.600" height="7.600" fill="#1f4f9c"/><path d="M5.400 7.400l2.600-3.200l2.400 2.400l2-2.800l2.600 2.800" stroke="#9fe0f4" stroke-width="1" fill="none"/><rect x="9" y="11" width="3" height="1.600" fill="#2f78c8"/><rect x="0.600" y="12.600" width="2.600" height="4.800" fill="#e82a1c"/><path d="M4 12.600v4.800M5.600 12.600v4.800M7.200 12.600v4.800M8.800 12.600v4.800M10.400 12.600v4.800M12 12.600v4.800" stroke="#3a3a3a" stroke-width="1.100"/></svg>
<svg style="left:423.5px;top:55.8px" width="18" height="18" viewBox="0 0 18 18"><rect x="0.600" y="1.400" width="14.400" height="13" rx="1.600" fill="#2f9caa"/><rect x="2.600" y="3.600" width="10.400" height="5" fill="#bfeef0"/><path d="M4 6h3M9 6h3M7.800 4.400v3.200" stroke="#2f9caa" stroke-width=".9"/><circle cx="13" cy="13" r="5.3999999999999995" fill="#f2f2f2"/><circle cx="13" cy="13" r="4.6" fill="#1f8fa0"/><path d="M10 13h5.5M13.3 10.3l2.7 2.7l-2.7 2.7" stroke="#fff" stroke-width="1.4" fill="none"/></svg>
<svg style="left:455.0px;top:55.8px" width="18" height="18" viewBox="0 0 18 18"><rect x="0.800" y="0.800" width="10.400" height="10" rx="1.600" fill="#8fd8dc" stroke="#3fa8b4" stroke-width=".8"/><rect x="6.600" y="7" width="10.600" height="10.200" rx="1.600" fill="#a8e4e4" stroke="#3fa8b4" stroke-width=".8"/><text x="6" y="7.600" font-size="5.500" font-weight="bold" text-anchor="middle" fill="#1f6f9a" font-family="Liberation Sans,sans-serif">LD</text><text x="12" y="14.600" font-size="5.500" font-weight="bold" text-anchor="middle" fill="#e8ffff" font-family="Liberation Sans,sans-serif">IL</text><path d="M3 9.400l9 -4.400" stroke="#2a4f9a" stroke-width=".8"/></svg>
<svg style="left:486.0px;top:55.8px" width="18" height="18" viewBox="0 0 18 18"><circle cx="9" cy="9" r="8.600" fill="#3f9f3a"/><circle cx="9" cy="9" r="8.600" fill="none" stroke="#8fc43a" stroke-width="1" opacity=".7"/><path d="M3.600 7h3.400c1.400 0 2.600 4 4 4h3.400M3.600 11h3.400c1.400 0 2.600-4 4-4h3.400" stroke="#f4fff0" stroke-width="1.500" fill="none"/></svg>
<svg style="left:517.0px;top:55.8px" width="18" height="18" viewBox="0 0 18 18"><rect x="0.600" y="0.800" width="13.400" height="14.600" rx="1" fill="#d8341c"/><rect x="0.600" y="0.800" width="5" height="14.600" fill="#b82414"/><circle cx="12.8" cy="13" r="5.7" fill="#f2f2f2"/><circle cx="12.8" cy="13" r="4.9" fill="#f06a1c"/><rect x="9.8" y="10.5" width="6" height="5" fill="#fff4e8"/><path d="M9.8 12.4h6M11.8 12.4v3.1M13.8 12.4v3.1" stroke="#12849a" stroke-width="0.6"/></svg>
<svg style="left:544.0px;top:55.8px" width="18" height="18" viewBox="0 0 18 18"><circle cx="9" cy="9" r="6.600" fill="none" stroke="#4f62c8" stroke-width="3.600" stroke-dasharray="3.100 2.080"/><circle cx="9" cy="9" r="5.600" fill="#eef0fb" stroke="#4f62c8" stroke-width="1.800"/><path d="M6.200 6.200l5.600 5.600M11.800 6.200l-5.600 5.600" stroke="#4f62c8" stroke-width="1.200"/></svg>
<svg style="left:570.5px;top:55.8px" width="18" height="18" viewBox="0 0 18 18"><path d="M2 1.400a1 1 0 0 1 1-1h9l3.400 3.400v12.800a1 1 0 0 1-1 1h-11.400a1 1 0 0 1-1-1z" fill="#3fb4bc" stroke="#2794a4" stroke-width=".7"/><rect x="4" y="4.600" width="9.600" height="2.400" fill="#d8f6f6"/><path d="M4 9.400h9.600M4 12h9.600M4 14.600h9.600M7.200 8.200v7.600M10.400 8.200v7.600" stroke="#d8f6f6" stroke-width="1.100"/></svg>
<svg style="left:596.5px;top:55.8px" width="18" height="18" viewBox="0 0 18 18"><path d="M1.600 0.600v15.800h15.800" stroke="#4a4fa8" stroke-width="1.500" fill="none"/><path d="M3.400 12.400l3.400-5l3 3l3.400-6.400l2.800 1.600" stroke="#6a5fd0" stroke-width="1.500" fill="none"/><circle cx="6.800" cy="7.400" r="1.300" fill="#9a78e0"/><circle cx="13.200" cy="4" r="1.300" fill="#9a78e0"/></svg>
<svg style="left:627.0px;top:55.8px" width="18" height="18" viewBox="0 0 18 18"><path d="M2 1.400a1 1 0 0 1 1-1h7.600l4.400 4.400v11.800a1 1 0 0 1-1 1h-11a1 1 0 0 1-1-1z" fill="#e6f8fb" stroke="#2f9fb4" stroke-width="1"/><path d="M4.400 0.600h3.400v6.800l-1.700-1.700l-1.700 1.700z" fill="#1f7fb8"/></svg>
<svg style="left:653.5px;top:55.8px" width="18" height="18" viewBox="0 0 18 18"><path d="M2 1.400a1 1 0 0 1 1-1h7.600l4.400 4.400v11.800a1 1 0 0 1-1 1h-11a1 1 0 0 1-1-1z" fill="#e6f8fb" stroke="#2f9fb4" stroke-width="1"/><path d="M4.400 0.600h3.400v6.800l-1.700-1.700l-1.700 1.700z" fill="#1f7fb8"/><circle cx="12.8" cy="12.6" r="5" fill="#146f98"/><text x="12.8" y="14.2" font-size="4.6" font-weight="bold" text-anchor="middle" fill="#fff" font-family="Liberation Sans,sans-serif">ALL</text></svg>
<svg style="left:680.0px;top:55.8px" width="18" height="18" viewBox="0 0 18 18"><path d="M2 1.400a1 1 0 0 1 1-1h7.600l4.400 4.400v11.800a1 1 0 0 1-1 1h-11a1 1 0 0 1-1-1z" fill="#e6f8fb" stroke="#2f9fb4" stroke-width="1"/><path d="M4.400 0.600h3.400v6.800l-1.700-1.700l-1.700 1.700z" fill="#1f7fb8"/><circle cx="12.8" cy="12.6" r="5" fill="#146f98"/><path d="M10.4 12.1a2.5 2.5 0 1 1 2.4 3.1" stroke="#fff" stroke-width="1.2" fill="none"/><path d="M8.8 10.6l1.6 2.6l2.2-1.8z" fill="#fff"/></svg>
<svg style="left:706.5px;top:55.8px" width="18" height="18" viewBox="0 0 18 18"><path d="M2 1.400a1 1 0 0 1 1-1h7.600l4.400 4.400v11.800a1 1 0 0 1-1 1h-11a1 1 0 0 1-1-1z" fill="#e6f8fb" stroke="#2f9fb4" stroke-width="1"/><path d="M4.400 0.600h3.400v6.800l-1.700-1.700l-1.700 1.700z" fill="#1f7fb8"/><circle cx="12.8" cy="12.6" r="5" fill="#146f98"/><path d="M15.200000000000001 12.1a2.5 2.5 0 1 0 -2.4 3.1" stroke="#fff" stroke-width="1.2" fill="none"/><path d="M16.8 10.6l-1.6 2.6l-2.2-1.8z" fill="#fff"/></svg>
<svg style="left:738.5px;top:55.8px" width="18" height="18" viewBox="0 0 18 18"><path d="M3 15.800l9.400-10.600" stroke="#33386a" stroke-width="2.600" stroke-linecap="round"/><path d="M10.600 6.400a3.300 3.300 0 0 1 4.400-4.800l-2 2.200l1.400 1.400l2.200-2a3.300 3.300 0 0 1-4.800 4.400z" fill="#33386a"/><path d="M5.600 5.600l9.600 10" stroke="#3f3f7a" stroke-width="2.200" stroke-linecap="round"/><path d="M1.400 1.600l2.400-0.600l3.200 3.400l-1.800 1.800l-3.400-3.200z" fill="#4a4a86"/></svg>
<svg style="left:764.5px;top:55.8px" width="18" height="18" viewBox="0 0 18 18"><path d="M0.800 5.400h10.700v-3l6 5.600h-16.700z" fill="#2f7fd0"/><path d="M11 12.600h-4.500v3l-6-5.600h10.500z" fill="#2a98b0"/><path d="M0.800 6.200h12M17.200 11.800h-12" stroke="#9fc8dc" stroke-width=".6" opacity=".7"/><circle cx="13" cy="12.6" r="5" fill="#1a86b4"/><circle cx="13" cy="12.6" r="2.3" fill="none" stroke="#fff" stroke-width="1.5" stroke-dasharray="1.4 0.9"/><circle cx="13" cy="12.6" r="1.5" fill="none" stroke="#fff" stroke-width="1"/></svg>
<svg style="left:809.0px;top:55.8px" width="18" height="18" viewBox="0 0 18 18"><defs><linearGradient id="g10" x1="0" y1="0" x2="1" y2="1"><stop offset="0" stop-color="#a074d4"/><stop offset="1" stop-color="#8458b8"/></linearGradient></defs><rect x="1.600" y="3.600" width="14.800" height="14" rx="1.200" fill="url(#g10)"/><rect x="0.800" y="0.800" width="16.400" height="3.600" rx="1" fill="#9a68d0"/><rect x="4.600" y="7" width="8.800" height="8" fill="#d8c4f0" opacity=".75"/></svg>
<svg style="left:836.0px;top:55.8px" width="18" height="18" viewBox="0 0 18 18"><defs><linearGradient id="g11" x1="0" y1="0" x2="1" y2="1"><stop offset="0" stop-color="#a074d4"/><stop offset="1" stop-color="#8458b8"/></linearGradient></defs><rect x="1.600" y="3.600" width="14.800" height="14" rx="1.200" fill="url(#g11)"/><rect x="0.800" y="0.800" width="16.400" height="3.600" rx="1" fill="#9a68d0"/><rect x="4.600" y="7" width="8.800" height="8" fill="#d8c4f0" opacity=".75"/><path d="M4 1l1.400 2.800M8 1l1.400 2.800M12 1l1.400 2.800" stroke="#e8d8ff" stroke-width="1.200"/><path d="M6 13h6" stroke="#7a4fb0" stroke-width="1.200"/></svg>
<svg style="left:862.0px;top:55.8px" width="18" height="18" viewBox="0 0 18 18"><defs><linearGradient id="g12" x1="0" y1="0" x2="1" y2="1"><stop offset="0" stop-color="#a074d4"/><stop offset="1" stop-color="#8458b8"/></linearGradient></defs><rect x="1.600" y="3.600" width="14.800" height="14" rx="1.200" fill="url(#g12)"/><rect x="0.800" y="0.800" width="16.400" height="3.600" rx="1" fill="#9a68d0"/><rect x="4.600" y="7" width="8.800" height="8" fill="#d8c4f0" opacity=".75"/><circle cx="13" cy="13" r="5.6" fill="#f2f2f2"/><circle cx="13" cy="13" r="4.8" fill="#8a5cc4"/><path d="M11 11l4 4M15 11l-4 4" stroke="#fff" stroke-width="1.3"/></svg>
<svg style="left:11.5px;top:105.2px" width="18" height="18" viewBox="0 0 18 18"><rect x="0.800" y="0.800" width="14.400" height="13.600" rx="2" fill="#5fc8c8" stroke="#38a4ac" stroke-width=".8"/><text x="5.400" y="6.400" font-size="5.500" font-weight="bold" text-anchor="middle" fill="#f0ffff" font-family="Liberation Sans,sans-serif">LD</text><path d="M2.400 8.200h11M2.400 11h6M5.400 7.400v6M9 2v5.400M12 2v5.400" stroke="#d0f4f4" stroke-width=".8"/><circle cx="12.4" cy="12.8" r="5.2" fill="#1a8a9c"/><circle cx="12.4" cy="12.8" r="2.3" fill="none" stroke="#fff" stroke-width="1.5" stroke-dasharray="1.4 0.9"/><circle cx="12.4" cy="12.8" r="1.5" fill="none" stroke="#fff" stroke-width="1"/></svg>
<svg style="left:43.0px;top:105.2px" width="18" height="18" viewBox="0 0 18 18"><path d="M5.600 10.300l-4.600 5.200" stroke="#bdbdbd" stroke-width="2.600" stroke-linecap="round"/><circle cx="9.700" cy="5.900" r="4.900" fill="#eeeeee" stroke="#cbcbcb" stroke-width="1.500"/><circle cx="14" cy="12.600" r="4.300" fill="#dadada" stroke="#f0f0f0" stroke-width=".8"/><path d="M11.800 12.600h4.400M14 10.400v4.400" stroke="#f6f6f6" stroke-width="1.300"/></svg>
<svg style="left:69.0px;top:105.2px" width="18" height="18" viewBox="0 0 18 18"><path d="M5.600 10.300l-4.600 5.200" stroke="#bdbdbd" stroke-width="2.600" stroke-linecap="round"/><circle cx="9.700" cy="5.900" r="4.900" fill="#eeeeee" stroke="#cbcbcb" stroke-width="1.500"/><circle cx="14" cy="12.600" r="4.300" fill="#dadada" stroke="#f0f0f0" stroke-width=".8"/><path d="M11.800 12.600h4.400" stroke="#f6f6f6" stroke-width="1.300"/></svg>
<svg style="left:100.0px;top:105.2px" width="18" height="18" viewBox="0 0 18 18"><defs><linearGradient id="g13" x1="0" y1="0" x2="1" y2="1"><stop offset="0" stop-color="#9fdde2"/><stop offset="1" stop-color="#b4e6ea"/></linearGradient></defs><path d="M1.600 3.600h14.800v11.400a2.400 2.400 0 0 1-2.400 2.400h-10a2.400 2.400 0 0 1-2.400-2.400z" fill="url(#g13)" stroke="#4fb6c0" stroke-width=".9"/><rect x="0.500" y="0.800" width="17" height="3.400" rx="1.400" fill="#62c4cc"/><path d="M10.600 2.500h4.400" stroke="#dff8f8" stroke-width="1"/><path d="M2.600 2.500h6" stroke="#8fd8dc" stroke-width="1"/><path d="M2.800 11.600h4M11.200 11.600h4M6.800 7.600v8M11.200 7.600v8" stroke="#2590a0" stroke-width="1.400" fill="none"/></svg>
<svg style="left:127.0px;top:105.2px" width="18" height="18" viewBox="0 0 18 18"><defs><linearGradient id="g14" x1="0" y1="0" x2="1" y2="1"><stop offset="0" stop-color="#9fdde2"/><stop offset="1" stop-color="#b4e6ea"/></linearGradient></defs><path d="M1.600 3.600h14.800v11.400a2.400 2.400 0 0 1-2.400 2.400h-10a2.400 2.400 0 0 1-2.400-2.400z" fill="url(#g14)" stroke="#4fb6c0" stroke-width=".9"/><rect x="0.500" y="0.800" width="17" height="3.400" rx="1.400" fill="#62c4cc"/><path d="M10.600 2.500h4.400" stroke="#dff8f8" stroke-width="1"/><path d="M2.600 2.500h6" stroke="#8fd8dc" stroke-width="1"/><text x="9" y="9.200" font-size="4.800" font-weight="bold" text-anchor="middle" fill="#2a7f94" font-family="Liberation Sans,sans-serif">VAR</text><path d="M3.400 13h3.600M11 13h3.600M7 10v6M11 10v6" stroke="#2590a0" stroke-width="1.300" fill="none"/></svg>
<svg style="left:153.5px;top:105.2px" width="18" height="18" viewBox="0 0 18 18"><defs><linearGradient id="g15" x1="0" y1="0" x2="1" y2="1"><stop offset="0" stop-color="#9fdde2"/><stop offset="1" stop-color="#b4e6ea"/></linearGradient></defs><path d="M1.600 3.600h14.800v11.400a2.400 2.400 0 0 1-2.400 2.400h-10a2.400 2.400 0 0 1-2.400-2.400z" fill="url(#g15)" stroke="#4fb6c0" stroke-width=".9"/><rect x="0.500" y="0.800" width="17" height="3.400" rx="1.400" fill="#62c4cc"/><path d="M10.600 2.500h4.400" stroke="#dff8f8" stroke-width="1"/><path d="M2.600 2.500h6" stroke="#8fd8dc" stroke-width="1"/><text x="9" y="9.200" font-size="4.800" font-weight="bold" text-anchor="middle" fill="#2a7f94" font-family="Liberation Sans,sans-serif">CMT</text><path d="M3.400 13h3.600M11 13h3.600M7 10v6M11 10v6" stroke="#2590a0" stroke-width="1.300" fill="none"/></svg>
<svg style="left:180.0px;top:105.2px" width="18" height="18" viewBox="0 0 18 18"><defs><linearGradient id="g16" x1="0" y1="0" x2="1" y2="1"><stop offset="0" stop-color="#9fdde2"/><stop offset="1" stop-color="#b4e6ea"/></linearGradient></defs><path d="M1.600 3.600h14.800v11.400a2.400 2.400 0 0 1-2.400 2.400h-10a2.400 2.400 0 0 1-2.400-2.400z" fill="url(#g16)" stroke="#4fb6c0" stroke-width=".9"/><rect x="0.500" y="0.800" width="17" height="3.400" rx="1.400" fill="#62c4cc"/><path d="M10.600 2.500h4.400" stroke="#dff8f8" stroke-width="1"/><path d="M2.600 2.500h6" stroke="#8fd8dc" stroke-width="1"/><text x="9" y="9.200" font-size="4.800" font-weight="bold" text-anchor="middle" fill="#2a7f94" font-family="Liberation Sans,sans-serif">VC</text><path d="M3.400 13h3.600M11 13h3.600M7 10v6M11 10v6" stroke="#2590a0" stroke-width="1.300" fill="none"/></svg>
<svg style="left:224.5px;top:105.2px" width="18" height="18" viewBox="0 0 18 18"><path d="M2.400 1l10 5l-3.600 1.400l5.400 6.600l-1.800 1.500l-5.400-6.600l-2.400 3z" fill="#34468e"/><text x="9.6" y="17.8" font-size="8.6" font-weight="bold" text-anchor="middle" fill="#1f7a14" font-family="Liberation Sans,sans-serif">Esc</text></svg>
<svg style="left:251.0px;top:105.2px" width="18" height="18" viewBox="0 0 18 18"><path d="M1.400 1.200a0.800 0.800 0 0 1 0.800-0.800h8.800l3.600 3.600v12.600a0.800 0.800 0 0 1-0.800 0.800h-11.600a0.800 0.800 0 0 1-0.800-0.800z" fill="#a9c2f2" stroke="#5f84dc" stroke-width=".9"/><path d="M6.600 13.400l7.600-7.600l3.400 3.400l-7.600 7.600h-2.200z" fill="#2a3f9a"/><path d="M6.600 13.400l2.400-2.400l3.400 3.400l-2.400 2.400h-2.200z" fill="#4f68c4"/></svg>
<svg style="left:278.0px;top:105.2px" width="18" height="18" viewBox="0 0 18 18"><path d="M9 1.400v10" stroke="#3450ac" stroke-width="1.500"/><rect x="6.400" y="0.600" width="5.200" height="1.800" fill="#3450ac"/><rect x="6.400" y="10.200" width="5.200" height="1.800" fill="#3450ac"/><text x="9" y="17.8" font-size="8.200000000000001" font-weight="bold" text-anchor="middle" fill="#1f7a14" font-family="Liberation Sans,sans-serif">sF2</text></svg>
<svg style="left:304.5px;top:105.2px" width="18" height="18" viewBox="0 0 18 18"><path d="M6 1.400v10" stroke="#3450ac" stroke-width="1.500"/><rect x="3.400" y="0.600" width="5.200" height="1.800" fill="#3450ac"/><path d="M5 12a5.500 4 0 0 1 11.500 0z" fill="#3a54b8"/><path d="M8 9.400h6" stroke="#d05a5a" stroke-width=".9"/><text x="9" y="17.8" font-size="8.200000000000001" font-weight="bold" text-anchor="middle" fill="#1f7a14" font-family="Liberation Sans,sans-serif">cF2</text></svg>
<svg style="left:334.5px;top:105.2px" width="18" height="18" viewBox="0 0 18 18"><path d="M1 6.400h16" stroke="#3450ac" stroke-width="1.500"/><rect x="0.600" y="5.200" width="2.400" height="2.400" fill="#4f78c8"/><rect x="15" y="5.200" width="2.400" height="2.400" fill="#4f78c8"/><text x="9.5" y="17.4" font-size="8.200000000000001" font-weight="bold" text-anchor="middle" fill="#1f7a14" font-family="Liberation Sans,sans-serif">F2</text></svg>
<svg style="left:361.0px;top:105.2px" width="18" height="18" viewBox="0 0 18 18"><path d="M1 6.400h6M11 6.400h6" stroke="#3450ac" stroke-width="1.400"/><path d="M6 10.600l7.600-8.400" stroke="#2a8fa8" stroke-width="1.500"/><text x="10" y="17.4" font-size="8.200000000000001" font-weight="bold" text-anchor="middle" fill="#1f7a14" font-family="Liberation Sans,sans-serif">F4</text></svg>
<svg style="left:393.0px;top:105.2px" width="18" height="18" viewBox="0 0 18 18"><path d="M0.600 6.400h5.600M11.800 6.400h5.600M6.200 1.600v9.600M11.800 1.600v9.600" stroke="#3450ac" stroke-width="1.400" fill="none"/><text x="9" y="17.6" font-size="8.200000000000001" font-weight="bold" text-anchor="middle" fill="#1f7a14" font-family="Liberation Sans,sans-serif">F5</text></svg>
<svg style="left:419.0px;top:105.2px" width="18" height="18" viewBox="0 0 18 18"><path d="M0.600 6.400h5.600M11.800 6.400h5.600M6.200 1.600v9.600M11.800 1.600v9.600" stroke="#3450ac" stroke-width="1.400" fill="none"/><path d="M4.600 10.400l8.800-8" stroke="#2a8fa8" stroke-width="1.400"/><text x="9" y="17.6" font-size="8.200000000000001" font-weight="bold" text-anchor="middle" fill="#1f7a14" font-family="Liberation Sans,sans-serif">F6</text></svg>
<svg style="left:445.5px;top:105.2px" width="18" height="18" viewBox="0 0 18 18"><path d="M0.600 6.400h5.600M11.800 6.400h5.600M6.200 1.600v9.600M11.800 1.600v9.600" stroke="#3450ac" stroke-width="1.400" fill="none"/><path d="M9 10.400v-7.600M7.200 4.800l1.800-2.400l1.800 2.400" stroke="#1a8fb8" stroke-width="1.300" fill="none"/><text x="9" y="17.6" font-size="8.200000000000001" font-weight="bold" text-anchor="middle" fill="#1f7a14" font-family="Liberation Sans,sans-serif">F7</text></svg>
<svg style="left:472.0px;top:105.2px" width="18" height="18" viewBox="0 0 18 18"><path d="M0.600 6.400h5.600M11.800 6.400h5.600M6.200 1.600v9.600M11.800 1.600v9.600" stroke="#3450ac" stroke-width="1.400" fill="none"/><path d="M9 2.400v7.600M7.200 8l1.800 2.400l1.800-2.400" stroke="#1a8fb8" stroke-width="1.300" fill="none"/><text x="9" y="17.6" font-size="8.200000000000001" font-weight="bold" text-anchor="middle" fill="#1f7a14" font-family="Liberation Sans,sans-serif">F8</text></svg>
<svg style="left:503.0px;top:105.2px" width="18" height="18" viewBox="0 0 18 18"><path d="M0.600 6.400h4M13.400 6.400h4" stroke="#3450ac" stroke-width="1.400"/><path d="M7.400 1.600c-3.400 1.600-3.400 8 0 9.600M10.600 1.600c3.400 1.600 3.400 8 0 9.600" stroke="#3450ac" stroke-width="1.500" fill="none"/><text x="9.4" y="17.6" font-size="8.200000000000001" font-weight="bold" text-anchor="middle" fill="#1f7a14" font-family="Liberation Sans,sans-serif">F9</text></svg>
<svg style="left:529.5px;top:105.2px" width="18" height="18" viewBox="0 0 18 18"><path d="M0.600 6.400h3M14.400 6.400h3" stroke="#3a58a8" stroke-width="1.400"/><path d="M6 2.400h-2.400v8h2.400M12 2.400h2.400v8h-2.400" stroke="#3a58a8" stroke-width="1.400" fill="none"/><path d="M6 6.400h6" stroke="#6f88c4" stroke-width="1.200" stroke-dasharray="1.200 .8"/><text x="9" y="17.6" font-size="8.200000000000001" font-weight="bold" text-anchor="middle" fill="#1f7a14" font-family="Liberation Sans,sans-serif">F10</text></svg>
<svg style="left:556.0px;top:105.2px" width="18" height="18" viewBox="0 0 18 18"><rect x="0.600" y="1.400" width="16.800" height="8.400" rx="1.200" fill="#cfe0fb" stroke="#86a8e8" stroke-width=".9"/><path d="M3.400 4v3" stroke="#4f78d0" stroke-width="1"/><text x="9" y="17.6" font-size="8.200000000000001" font-weight="bold" text-anchor="middle" fill="#1f7a14" font-family="Liberation Sans,sans-serif">F12</text></svg>
<svg style="left:586.0px;top:105.2px" width="18" height="18" viewBox="0 0 18 18"><path d="M0.600 6.400h4.400M13 6.400h4.400" stroke="#3450ac" stroke-width="1.400"/><rect x="5" y="2.400" width="8" height="8" fill="#f4f8ff" stroke="#3450ac" stroke-width="1.400"/><text x="9" y="17.8" font-size="8.200000000000001" font-weight="bold" text-anchor="middle" fill="#1f7a14" font-family="Liberation Sans,sans-serif">sF9</text></svg>
<svg style="left:632.0px;top:105.2px" width="18" height="18" viewBox="0 0 18 18"><path d="M2.400 1.400l13.600 7.600l-13.600 7.600z" fill="#cbcbcb"/></svg>
<svg style="left:658.0px;top:105.2px" width="18" height="18" viewBox="0 0 18 18"><rect x="1" y="1" width="10" height="9" rx="1.400" fill="#cbcbcb"/><rect x="6" y="6.400" width="11" height="10" rx="1.400" fill="#dadada" stroke="#e8e8e8" stroke-width=".8"/><path d="M4 3.400v4M7 3.400v4" stroke="#efefef" stroke-width="1.100"/><rect x="10" y="11" width="3.600" height="2.800" fill="#efefef"/></svg>
<svg style="left:685.0px;top:105.2px" width="18" height="18" viewBox="0 0 18 18"><path d="M2 11.600l7.600-8.400l3 2.600l-7.400 8.600z" fill="#cbcbcb" transform="rotate(8 9 9)"/><path d="M8.600 5.400l7 10.400l-2.200 1.400l-7-10.400z" fill="#cbcbcb"/></svg>
<svg style="left:710.0px;top:105.2px" width="18" height="18" viewBox="0 0 18 18"><path d="M0.600 9.600l6.400-7.200l2.600 2.200l-6.200 7.400z" fill="#cbcbcb"/><path d="M7 4.400l5 6.400l-2 1.400l-5-6.400z" fill="#cbcbcb"/><path d="M8 9h9.600l-4.800 7.600z" fill="#bdbdbd"/></svg>
<svg style="left:742.0px;top:105.2px" width="18" height="18" viewBox="0 0 18 18"><path d="M0.600 6.400h5M9.400 6.400h5M5.600 1v10.800M9.400 1v10.800" stroke="#cbcbcb" stroke-width="1.400" fill="none"/><circle cx="12" cy="12.400" r="4.400" fill="#ececec" stroke="#cbcbcb" stroke-width="1.500"/><path d="M12 10v2.600l1.800 1.400" stroke="#cbcbcb" stroke-width="1.100" fill="none"/></svg>
<svg style="left:768.0px;top:105.2px" width="18" height="18" viewBox="0 0 18 18"><path d="M0.600 6.400h5M9.400 6.400h5M5.600 1v10.800M9.400 1v10.800" stroke="#cbcbcb" stroke-width="1.400" fill="none"/><rect x="8" y="8.400" width="8.400" height="8.400" rx="1.600" fill="#ececec" stroke="#cbcbcb" stroke-width="1.500"/><path d="M10 12.600h4.400" stroke="#cbcbcb" stroke-width="1.200"/></svg>
<div style="left:0px;top:130px;width:232px;height:15.4px;background:#282828"></div>
<span style="left:3px;top:130.6px;font-size:9.6px;color:#9e9e9e;line-height:14px;">Project Window</span>
<svg style="left:196px;top:133px" width="34" height="10" viewBox="0 0 34 10"><path d="M1 3h6l-3 3.4z" fill="#a8a8a8"/><path d="M13.5 1v4.5M16.5 1v4.5M13.5 1h3M12 5.5h6M15 5.5v3.5" stroke="#a4a4a4" stroke-width="1" fill="none"/><path d="M26 1.5l5.5 5.5M31.5 1.5l-5.5 5.5" stroke="#b4b4b4" stroke-width="1.1"/></svg>
<div style="left:4px;top:149px;width:225px;height:339px;background:#fff;border:1px solid #8c8c8c;box-shadow:inset 1px 1px 0 #c8c8c8,inset -1px -1px 0 #e4e4e4"></div>
<div style="left:210px;top:152px;width:14px;height:319px;background:#f0f0f0"></div>
<div style="left:210px;top:168px;width:14px;height:274px;background:#cdcdcd"></div>
<svg style="left:213.8px;top:159.6px" width="6.4" height="4.8" viewBox="0 0 6.4 4.8"><path d="M0.6 3.8L3.2 1.2L5.8 3.8" stroke="#505050" stroke-width="1.5" fill="none"/></svg>
<svg style="left:213.8px;top:460.6px" width="6.4" height="4.8" viewBox="0 0 6.4 4.8"><path d="M0.6 1L3.2 3.6L5.8 1" stroke="#505050" stroke-width="1.5" fill="none"/></svg>
<div style="left:6px;top:471px;width:218px;height:13px;background:#f0f0f0"></div>
<div style="left:22.5px;top:471px;width:108px;height:13px;background:#cdcdcd"></div>
<svg style="left:13.6px;top:474.3px" width="4.8" height="6.4" viewBox="0 0 4.8 6.4"><path d="M3.8 0.6L1.2 3.2L3.8 5.8" stroke="#505050" stroke-width="1.5" fill="none"/></svg>
<svg style="left:199.6px;top:474.3px" width="4.8" height="6.4" viewBox="0 0 4.8 6.4"><path d="M1 0.6L3.6 3.2L1 5.8" stroke="#505050" stroke-width="1.5" fill="none"/></svg>
<div style="left:210px;top:471px;width:14px;height:13px;background:#f0f0f0"></div>
<div class="clip" style="left:6px;top:152px;width:204px;height:319px">
<span style="left:43px;top:5.1px;font-size:10.4px;color:#000;line-height:14px;letter-spacing:-0.212px;">Project [Memory Reg and Data Type</span>
<svg style="left:23.7px;top:3.4px" width="14.8" height="14.8" viewBox="0 0 14 14"><rect x="0.500" y="0.500" width="10" height="12.500" rx="1" fill="#1f3f8a"/><rect x="8" y="5" width="5.500" height="8.500" fill="#1f3f8a"/><rect x="8" y="5" width="5.500" height="8.500" fill="none" stroke="#fff" stroke-width=".5" opacity=".6"/><path d="M2.500 3v4M4.500 3v2" stroke="#fff" stroke-width="1"/><rect x="5.500" y="4" width="2.800" height="7" fill="none" stroke="#fff" stroke-width="1"/></svg>
<div style="left:17px;top:11px;width:7px;height:1px;background:repeating-linear-gradient(to right,#cdcdcd 0,#cdcdcd 1px,transparent 1px,transparent 2px)"></div>
<svg style="left:10px;top:8px" width="6" height="6" viewBox="0 0 6 6"><path d="M5.5 0.5v5h-5z" fill="#404040"/></svg>
<div style="left:58px;top:20px;width:42px;height:14px;background:#f0f0f0"></div>
<span style="left:61.5px;top:21.1px;font-size:10.4px;color:#000;line-height:14px;letter-spacing:-0.454px;">Program</span>
<svg style="left:41.7px;top:19.4px" width="14.8" height="14.8" viewBox="0 0 14 14"><path d="M0.500 3.500h9l4 3v7h-13z" fill="#2f74d8"/><path d="M4 0.500h6l3.500 3.500v6h-9.500z" fill="#dfeaf8" stroke="#8fb0e0" stroke-width=".6"/><path d="M0.500 6h9v7.500h-9z" fill="#2f7ae0"/><path d="M1.500 11.500l2.500-3l2 2l2.500-3.500" stroke="#8fc0f8" stroke-width=".9" fill="none"/></svg>
<div style="left:35px;top:27px;width:7px;height:1px;background:repeating-linear-gradient(to right,#cdcdcd 0,#cdcdcd 1px,transparent 1px,transparent 2px)"></div>
<svg style="left:28px;top:24px" width="6" height="6" viewBox="0 0 6 6"><path d="M5.5 0.5v5h-5z" fill="#404040"/></svg>
<span style="left:80px;top:37.1px;font-size:10.4px;color:#000;line-height:14px;letter-spacing:-0.363px;">Variable Editor</span>
<svg style="left:60.7px;top:35.4px" width="14.8" height="14.8" viewBox="0 0 14 14"><text x="7.500" y="4.600" font-size="5.400" font-weight="bold" text-anchor="middle" fill="#e01010" font-family="Liberation Sans,sans-serif">VR</text><path d="M0.500 9.500h4M9.500 9.500h4M4.800 5.500v8M9.200 5.500v8" stroke="#1f3f86" stroke-width="1.800" fill="none"/></svg>
<div style="left:49px;top:43px;width:12px;height:1px;background:repeating-linear-gradient(to right,#cdcdcd 0,#cdcdcd 1px,transparent 1px,transparent 2px)"></div>
<span style="left:80px;top:53.1px;font-size:10.4px;color:#000;line-height:14px;letter-spacing:-0.185px;">[000] Pgm000 : Scan</span>
<svg style="left:60.7px;top:51.4px" width="14.8" height="14.8" viewBox="0 0 14 14"><path d="M0.500 0.500v13M0.500 3h12.500M3.500 1v4M9.500 1v4M0.500 10h12.500M3 8v4M5.500 8v4M8.500 8v4M11 8v4" stroke="#2a4a94" stroke-width=".9" fill="none"/></svg>
<div style="left:49px;top:59px;width:12px;height:1px;background:repeating-linear-gradient(to right,#cdcdcd 0,#cdcdcd 1px,transparent 1px,transparent 2px)"></div>
<span style="left:61.5px;top:69.1px;font-size:10.4px;color:#000;line-height:14px;letter-spacing:-0.394px;">Parameter</span>
<svg style="left:41.7px;top:67.4px" width="14.8" height="14.8" viewBox="0 0 14 14"><path d="M0.500 1h7.500v4.500h5.500v8h-13z" fill="#c8201c"/><path d="M0.500 1h7.500v4.500h-7.500z" fill="#a81814"/><path d="M8 5.500h5.500v8h-5.500z" fill="#b01c18"/></svg>
<div style="left:35px;top:75px;width:7px;height:1px;background:repeating-linear-gradient(to right,#cdcdcd 0,#cdcdcd 1px,transparent 1px,transparent 2px)"></div>
<svg style="left:29px;top:71px" width="5" height="8" viewBox="0 0 5 8"><path d="M0.5 0.8L4 4L0.5 7.2z" fill="#fff" stroke="#a0a0a0" stroke-width="0.8"/></svg>
<span style="left:61.5px;top:85.1px;font-size:10.4px;color:#000;line-height:14px;letter-spacing:-0.489px;">Reserved IO</span>
<svg style="left:41.7px;top:83.4px" width="14.8" height="14.8" viewBox="0 0 14 14"><path d="M0.500 1h7.500v4.500h5.500v8h-13z" fill="#1f3f86"/><path d="M8 5.500h5.500v8h-5.500z" fill="#18306c"/><path d="M4.200 3.200v5" stroke="#fff" stroke-width="1.700"/><rect x="3.350" y="9.400" width="1.700" height="1.700" fill="#fff"/></svg>
<div style="left:35px;top:91px;width:7px;height:1px;background:repeating-linear-gradient(to right,#cdcdcd 0,#cdcdcd 1px,transparent 1px,transparent 2px)"></div>
<svg style="left:29px;top:87px" width="5" height="8" viewBox="0 0 5 8"><path d="M0.5 0.8L4 4L0.5 7.2z" fill="#fff" stroke="#a0a0a0" stroke-width="0.8"/></svg>
<span style="left:61.5px;top:101.1px;font-size:10.4px;color:#000;line-height:14px;letter-spacing:-0.408px;">Card Properties</span>
<svg style="left:41.7px;top:99.4px" width="14.8" height="14.8" viewBox="0 0 14 14"><path d="M0.500 1h7.500v4.500h5.500v8h-13z" fill="#1f3f86"/><path d="M8 5.500h5.500v8h-5.500z" fill="#18306c"/><path d="M0.500 1h7.500v4.500h-7.500z" fill="#2a4c9c"/></svg>
<div style="left:35px;top:107px;width:7px;height:1px;background:repeating-linear-gradient(to right,#cdcdcd 0,#cdcdcd 1px,transparent 1px,transparent 2px)"></div>
<svg style="left:28px;top:104px" width="6" height="6" viewBox="0 0 6 6"><path d="M5.5 0.5v5h-5z" fill="#404040"/></svg>
<span style="left:80px;top:117.1px;font-size:10.4px;color:#000;line-height:14px;letter-spacing:-0.26px;">Local : 12 Slot</span>
<svg style="left:60.7px;top:115.4px" width="14.8" height="14.8" viewBox="0 0 14 14"><rect x="0.500" y="0.500" width="10.500" height="13" rx="1" fill="#1f3f86"/><rect x="9" y="6.500" width="4.500" height="7" fill="#18306c"/><path d="M2.500 4h6.500M2.500 7h6.500M2.500 10h6.500" stroke="#fff" stroke-width="1.200"/></svg>
<div style="left:53px;top:123px;width:8px;height:1px;background:repeating-linear-gradient(to right,#cdcdcd 0,#cdcdcd 1px,transparent 1px,transparent 2px)"></div>
<svg style="left:46px;top:120px" width="6" height="6" viewBox="0 0 6 6"><path d="M5.5 0.5v5h-5z" fill="#404040"/></svg>
<span style="left:98.5px;top:133.1px;font-size:10.4px;color:#000;line-height:14px;letter-spacing:-0.21px;">[XY:0000] PLC-ES In.Out</span>
<svg style="left:79.7px;top:131.4px" width="14.8" height="14.8" viewBox="0 0 14 14"><path d="M1 1h3M5.500 1h3M10 1h3M1 13.500h3M5.500 13.500h3M10 13.500h3" stroke="#2a4a94" stroke-width="1"/><path d="M2.500 3.500v8" stroke="#1f3f86" stroke-width="1.400"/><ellipse cx="8.800" cy="7.500" rx="3.200" ry="4" fill="none" stroke="#1f3f86" stroke-width="1.400"/></svg>
<div style="left:67px;top:139px;width:13px;height:1px;background:repeating-linear-gradient(to right,#cdcdcd 0,#cdcdcd 1px,transparent 1px,transparent 2px)"></div>
<span style="left:98.5px;top:149.1px;font-size:10.4px;color:#000;line-height:14px;letter-spacing:-0.219px;">[XY:0020] No Card</span>
<svg style="left:79.7px;top:147.4px" width="14.8" height="14.8" viewBox="0 0 14 14"><path d="M0.500 0.800h3M5 0.800h3.500M10 0.800h3" stroke="#2a4a94" stroke-width="1"/><text x="7" y="13.200" font-size="13" font-weight="bold" text-anchor="middle" fill="#1f3f86" stroke="#1f3f86" stroke-width=".4" font-family="Liberation Sans,sans-serif">?</text></svg>
<div style="left:67px;top:155px;width:13px;height:1px;background:repeating-linear-gradient(to right,#cdcdcd 0,#cdcdcd 1px,transparent 1px,transparent 2px)"></div>
<span style="left:98.5px;top:165.1px;font-size:10.4px;color:#000;line-height:14px;letter-spacing:-0.219px;">[XY:0030] No Card</span>
<svg style="left:79.7px;top:163.4px" width="14.8" height="14.8" viewBox="0 0 14 14"><path d="M0.500 0.800h3M5 0.800h3.500M10 0.800h3" stroke="#2a4a94" stroke-width="1"/><text x="7" y="13.200" font-size="13" font-weight="bold" text-anchor="middle" fill="#1f3f86" stroke="#1f3f86" stroke-width=".4" font-family="Liberation Sans,sans-serif">?</text></svg>
<div style="left:67px;top:171px;width:13px;height:1px;background:repeating-linear-gradient(to right,#cdcdcd 0,#cdcdcd 1px,transparent 1px,transparent 2px)"></div>
<span style="left:98.5px;top:181.1px;font-size:10.4px;color:#000;line-height:14px;letter-spacing:-0.219px;">[XY:0040] No Card</span>
<svg style="left:79.7px;top:179.4px" width="14.8" height="14.8" viewBox="0 0 14 14"><path d="M0.500 0.800h3M5 0.800h3.500M10 0.800h3" stroke="#2a4a94" stroke-width="1"/><text x="7" y="13.200" font-size="13" font-weight="bold" text-anchor="middle" fill="#1f3f86" stroke="#1f3f86" stroke-width=".4" font-family="Liberation Sans,sans-serif">?</text></svg>
<div style="left:67px;top:187px;width:13px;height:1px;background:repeating-linear-gradient(to right,#cdcdcd 0,#cdcdcd 1px,transparent 1px,transparent 2px)"></div>
<span style="left:98.5px;top:197.1px;font-size:10.4px;color:#000;line-height:14px;letter-spacing:-0.219px;">[XY:0050] No Card</span>
<svg style="left:79.7px;top:195.4px" width="14.8" height="14.8" viewBox="0 0 14 14"><path d="M0.500 0.800h3M5 0.800h3.500M10 0.800h3" stroke="#2a4a94" stroke-width="1"/><text x="7" y="13.200" font-size="13" font-weight="bold" text-anchor="middle" fill="#1f3f86" stroke="#1f3f86" stroke-width=".4" font-family="Liberation Sans,sans-serif">?</text></svg>
<div style="left:67px;top:203px;width:13px;height:1px;background:repeating-linear-gradient(to right,#cdcdcd 0,#cdcdcd 1px,transparent 1px,transparent 2px)"></div>
<span style="left:98.5px;top:213.1px;font-size:10.4px;color:#000;line-height:14px;letter-spacing:-0.219px;">[XY:0060] No Card</span>
<svg style="left:79.7px;top:211.4px" width="14.8" height="14.8" viewBox="0 0 14 14"><path d="M0.500 0.800h3M5 0.800h3.500M10 0.800h3" stroke="#2a4a94" stroke-width="1"/><text x="7" y="13.200" font-size="13" font-weight="bold" text-anchor="middle" fill="#1f3f86" stroke="#1f3f86" stroke-width=".4" font-family="Liberation Sans,sans-serif">?</text></svg>
<div style="left:67px;top:219px;width:13px;height:1px;background:repeating-linear-gradient(to right,#cdcdcd 0,#cdcdcd 1px,transparent 1px,transparent 2px)"></div>
<span style="left:98.5px;top:229.1px;font-size:10.4px;color:#000;line-height:14px;letter-spacing:-0.219px;">[XY:0070] No Card</span>
<svg style="left:79.7px;top:227.4px" width="14.8" height="14.8" viewBox="0 0 14 14"><path d="M0.500 0.800h3M5 0.800h3.500M10 0.800h3" stroke="#2a4a94" stroke-width="1"/><text x="7" y="13.200" font-size="13" font-weight="bold" text-anchor="middle" fill="#1f3f86" stroke="#1f3f86" stroke-width=".4" font-family="Liberation Sans,sans-serif">?</text></svg>
<div style="left:67px;top:235px;width:13px;height:1px;background:repeating-linear-gradient(to right,#cdcdcd 0,#cdcdcd 1px,transparent 1px,transparent 2px)"></div>
<span style="left:98.5px;top:245.1px;font-size:10.4px;color:#000;line-height:14px;letter-spacing:-0.219px;">[XY:0080] No Card</span>
<svg style="left:79.7px;top:243.4px" width="14.8" height="14.8" viewBox="0 0 14 14"><path d="M0.500 0.800h3M5 0.800h3.500M10 0.800h3" stroke="#2a4a94" stroke-width="1"/><text x="7" y="13.200" font-size="13" font-weight="bold" text-anchor="middle" fill="#1f3f86" stroke="#1f3f86" stroke-width=".4" font-family="Liberation Sans,sans-serif">?</text></svg>
<div style="left:67px;top:251px;width:13px;height:1px;background:repeating-linear-gradient(to right,#cdcdcd 0,#cdcdcd 1px,transparent 1px,transparent 2px)"></div>
<span style="left:98.5px;top:261.1px;font-size:10.4px;color:#000;line-height:14px;letter-spacing:-0.219px;">[XY:0090] No Card</span>
<svg style="left:79.7px;top:259.4px" width="14.8" height="14.8" viewBox="0 0 14 14"><path d="M0.500 0.800h3M5 0.800h3.500M10 0.800h3" stroke="#2a4a94" stroke-width="1"/><text x="7" y="13.200" font-size="13" font-weight="bold" text-anchor="middle" fill="#1f3f86" stroke="#1f3f86" stroke-width=".4" font-family="Liberation Sans,sans-serif">?</text></svg>
<div style="left:67px;top:267px;width:13px;height:1px;background:repeating-linear-gradient(to right,#cdcdcd 0,#cdcdcd 1px,transparent 1px,transparent 2px)"></div>
<span style="left:98.5px;top:277.1px;font-size:10.4px;color:#000;line-height:14px;letter-spacing:-0.219px;">[XY:0100] No Card</span>
<svg style="left:79.7px;top:275.4px" width="14.8" height="14.8" viewBox="0 0 14 14"><path d="M0.500 0.800h3M5 0.800h3.500M10 0.800h3" stroke="#2a4a94" stroke-width="1"/><text x="7" y="13.200" font-size="13" font-weight="bold" text-anchor="middle" fill="#1f3f86" stroke="#1f3f86" stroke-width=".4" font-family="Liberation Sans,sans-serif">?</text></svg>
<div style="left:67px;top:283px;width:13px;height:1px;background:repeating-linear-gradient(to right,#cdcdcd 0,#cdcdcd 1px,transparent 1px,transparent 2px)"></div>
<span style="left:98.5px;top:293.1px;font-size:10.4px;color:#000;line-height:14px;letter-spacing:-0.173px;">[XY:0110] No Card</span>
<svg style="left:79.7px;top:291.4px" width="14.8" height="14.8" viewBox="0 0 14 14"><path d="M0.500 0.800h3M5 0.800h3.500M10 0.800h3" stroke="#2a4a94" stroke-width="1"/><text x="7" y="13.200" font-size="13" font-weight="bold" text-anchor="middle" fill="#1f3f86" stroke="#1f3f86" stroke-width=".4" font-family="Liberation Sans,sans-serif">?</text></svg>
<div style="left:67px;top:299px;width:13px;height:1px;background:repeating-linear-gradient(to right,#cdcdcd 0,#cdcdcd 1px,transparent 1px,transparent 2px)"></div>
<span style="left:98.5px;top:309.1px;font-size:10.4px;color:#000;line-height:14px;letter-spacing:-0.219px;">[XY:0120] No Card</span>
<svg style="left:79.7px;top:307.4px" width="14.8" height="14.8" viewBox="0 0 14 14"><path d="M0.500 0.800h3M5 0.800h3.500M10 0.800h3" stroke="#2a4a94" stroke-width="1"/><text x="7" y="13.200" font-size="13" font-weight="bold" text-anchor="middle" fill="#1f3f86" stroke="#1f3f86" stroke-width=".4" font-family="Liberation Sans,sans-serif">?</text></svg>
<div style="left:67px;top:315px;width:13px;height:1px;background:repeating-linear-gradient(to right,#cdcdcd 0,#cdcdcd 1px,transparent 1px,transparent 2px)"></div>
<div style="left:31px;top:19px;width:1px;height:88px;background:repeating-linear-gradient(to bottom,#cdcdcd 0,#cdcdcd 1px,transparent 1px,transparent 2px)"></div>
<div style="left:49px;top:35px;width:1px;height:24px;background:repeating-linear-gradient(to bottom,#cdcdcd 0,#cdcdcd 1px,transparent 1px,transparent 2px)"></div>
<div style="left:49px;top:115px;width:1px;height:8px;background:repeating-linear-gradient(to bottom,#cdcdcd 0,#cdcdcd 1px,transparent 1px,transparent 2px)"></div>
<div style="left:67px;top:131px;width:1px;height:197px;background:repeating-linear-gradient(to bottom,#cdcdcd 0,#cdcdcd 1px,transparent 1px,transparent 2px)"></div>
</div>
<div style="left:0px;top:497px;width:232px;height:15.4px;background:#282828"></div>
<span style="left:3px;top:497.6px;font-size:9.6px;color:#9e9e9e;line-height:14px;">Function Block</span>
<svg style="left:196px;top:500px" width="34" height="10" viewBox="0 0 34 10"><path d="M1 3h6l-3 3.4z" fill="#a8a8a8"/><path d="M13.5 1v4.5M16.5 1v4.5M13.5 1h3M12 5.5h6M15 5.5v3.5" stroke="#a4a4a4" stroke-width="1" fill="none"/><path d="M26 1.5l5.5 5.5M31.5 1.5l-5.5 5.5" stroke="#b4b4b4" stroke-width="1.1"/></svg>
<div style="left:4px;top:516px;width:225px;height:280px;background:#fff;border:1px solid #8c8c8c;box-shadow:inset 1px 1px 0 #c8c8c8,inset -1px -1px 0 #e4e4e4"></div>
<div class="clip" style="left:6px;top:518px;width:218px;height:262px">
<span style="left:43.4px;top:5.1px;font-size:10.4px;color:#000;line-height:14px;letter-spacing:-0.362px;">User Library[Memory Reg and Data Type]</span>
<svg style="left:23.7px;top:3.4px" width="14.8" height="14.8" viewBox="0 0 14 14"><rect x="0.500" y="0.500" width="10" height="12.500" rx="1" fill="#1f3f8a"/><rect x="8" y="5" width="5.500" height="8.500" fill="#1f3f8a"/><rect x="8" y="5" width="5.500" height="8.500" fill="none" stroke="#fff" stroke-width=".5" opacity=".6"/><path d="M2.500 3v4M4.500 3v2" stroke="#fff" stroke-width="1"/><rect x="5.500" y="4" width="2.800" height="7" fill="none" stroke="#fff" stroke-width="1"/></svg>
<div style="left:13px;top:11px;width:11px;height:1px;background:repeating-linear-gradient(to right,#cdcdcd 0,#cdcdcd 1px,transparent 1px,transparent 2px)"></div>
<span style="left:43.4px;top:21.1px;font-size:10.4px;color:#000;line-height:14px;letter-spacing:-0.439px;">System Library</span>
<svg style="left:23.7px;top:19.4px" width="14.8" height="14.8" viewBox="0 0 14 14"><rect x="0.500" y="0.500" width="10" height="12.500" rx="1" fill="#222"/><rect x="8" y="5" width="5.500" height="8.500" fill="#222"/><rect x="8" y="5" width="5.500" height="8.500" fill="none" stroke="#fff" stroke-width=".5" opacity=".6"/><path d="M2.500 3v4M4.500 3v2" stroke="#fff" stroke-width="1"/><rect x="5.500" y="4" width="2.800" height="7" fill="none" stroke="#fff" stroke-width="1"/></svg>
<div style="left:17px;top:27px;width:7px;height:1px;background:repeating-linear-gradient(to right,#cdcdcd 0,#cdcdcd 1px,transparent 1px,transparent 2px)"></div>
<svg style="left:10px;top:24px" width="6" height="6" viewBox="0 0 6 6"><path d="M5.5 0.5v5h-5z" fill="#404040"/></svg>
<span style="left:62px;top:37.1px;font-size:10.4px;color:#000;line-height:14px;letter-spacing:-0.377px;">GET(Digital conversion value)</span>
<svg style="left:41.7px;top:35.4px" width="14.8" height="14.8" viewBox="0 0 14 14"><rect x="0.500" y="0.500" width="10.500" height="13" rx="1" fill="#1a1a1a"/><rect x="9" y="6.500" width="4.500" height="7" fill="#111"/><path d="M2.500 4h6.500M2.500 7h6.500M2.500 10h6.500" stroke="#fff" stroke-width="1.200"/></svg>
<div style="left:35px;top:43px;width:7px;height:1px;background:repeating-linear-gradient(to right,#cdcdcd 0,#cdcdcd 1px,transparent 1px,transparent 2px)"></div>
<svg style="left:29px;top:39px" width="5" height="8" viewBox="0 0 5 8"><path d="M0.5 0.8L4 4L0.5 7.2z" fill="#fff" stroke="#a0a0a0" stroke-width="0.8"/></svg>
<span style="left:62px;top:53.1px;font-size:10.4px;color:#000;line-height:14px;letter-spacing:-0.143px;">GET(Temp detection value)</span>
<svg style="left:41.7px;top:51.4px" width="14.8" height="14.8" viewBox="0 0 14 14"><rect x="0.500" y="0.500" width="10.500" height="13" rx="1" fill="#1a1a1a"/><rect x="9" y="6.500" width="4.500" height="7" fill="#111"/><path d="M2.500 4h6.500M2.500 7h6.500M2.500 10h6.500" stroke="#fff" stroke-width="1.200"/></svg>
<div style="left:35px;top:59px;width:7px;height:1px;background:repeating-linear-gradient(to right,#cdcdcd 0,#cdcdcd 1px,transparent 1px,transparent 2px)"></div>
<svg style="left:29px;top:55px" width="5" height="8" viewBox="0 0 5 8"><path d="M0.5 0.8L4 4L0.5 7.2z" fill="#fff" stroke="#a0a0a0" stroke-width="0.8"/></svg>
<span style="left:62px;top:69.1px;font-size:10.4px;color:#000;line-height:14px;letter-spacing:-0.444px;">GET(Error Code)</span>
<svg style="left:41.7px;top:67.4px" width="14.8" height="14.8" viewBox="0 0 14 14"><rect x="0.500" y="0.500" width="10.500" height="13" rx="1" fill="#1a1a1a"/><rect x="9" y="6.500" width="4.500" height="7" fill="#111"/><path d="M2.500 4h6.500M2.500 7h6.500M2.500 10h6.500" stroke="#fff" stroke-width="1.200"/></svg>
<div style="left:35px;top:75px;width:7px;height:1px;background:repeating-linear-gradient(to right,#cdcdcd 0,#cdcdcd 1px,transparent 1px,transparent 2px)"></div>
<svg style="left:29px;top:71px" width="5" height="8" viewBox="0 0 5 8"><path d="M0.5 0.8L4 4L0.5 7.2z" fill="#fff" stroke="#a0a0a0" stroke-width="0.8"/></svg>
<span style="left:62px;top:85.1px;font-size:10.4px;color:#000;line-height:14px;letter-spacing:-0.207px;">PUT(Digital output value)</span>
<svg style="left:41.7px;top:83.4px" width="14.8" height="14.8" viewBox="0 0 14 14"><rect x="0.500" y="0.500" width="10.500" height="13" rx="1" fill="#1a1a1a"/><rect x="9" y="6.500" width="4.500" height="7" fill="#111"/><path d="M2.500 4h6.500M2.500 7h6.500M2.500 10h6.500" stroke="#fff" stroke-width="1.200"/></svg>
<div style="left:35px;top:91px;width:7px;height:1px;background:repeating-linear-gradient(to right,#cdcdcd 0,#cdcdcd 1px,transparent 1px,transparent 2px)"></div>
<svg style="left:29px;top:87px" width="5" height="8" viewBox="0 0 5 8"><path d="M0.5 0.8L4 4L0.5 7.2z" fill="#fff" stroke="#a0a0a0" stroke-width="0.8"/></svg>
<span style="left:62px;top:101.1px;font-size:10.4px;color:#000;line-height:14px;letter-spacing:-0.628px;">PUT(ETC)</span>
<svg style="left:41.7px;top:99.4px" width="14.8" height="14.8" viewBox="0 0 14 14"><rect x="0.500" y="0.500" width="10.500" height="13" rx="1" fill="#1a1a1a"/><rect x="9" y="6.500" width="4.500" height="7" fill="#111"/><path d="M2.500 4h6.500M2.500 7h6.500M2.500 10h6.500" stroke="#fff" stroke-width="1.200"/></svg>
<div style="left:35px;top:107px;width:7px;height:1px;background:repeating-linear-gradient(to right,#cdcdcd 0,#cdcdcd 1px,transparent 1px,transparent 2px)"></div>
<svg style="left:29px;top:103px" width="5" height="8" viewBox="0 0 5 8"><path d="M0.5 0.8L4 4L0.5 7.2z" fill="#fff" stroke="#a0a0a0" stroke-width="0.8"/></svg>
<span style="left:62px;top:117.1px;font-size:10.4px;color:#000;line-height:14px;letter-spacing:-0.443px;">Positioning</span>
<svg style="left:41.7px;top:115.4px" width="14.8" height="14.8" viewBox="0 0 14 14"><rect x="0.500" y="0.500" width="10.500" height="13" rx="1" fill="#1a1a1a"/><rect x="9" y="6.500" width="4.500" height="7" fill="#111"/><path d="M2.500 4h6.500M2.500 7h6.500M2.500 10h6.500" stroke="#fff" stroke-width="1.200"/></svg>
<div style="left:35px;top:123px;width:7px;height:1px;background:repeating-linear-gradient(to right,#cdcdcd 0,#cdcdcd 1px,transparent 1px,transparent 2px)"></div>
<svg style="left:29px;top:119px" width="5" height="8" viewBox="0 0 5 8"><path d="M0.5 0.8L4 4L0.5 7.2z" fill="#fff" stroke="#a0a0a0" stroke-width="0.8"/></svg>
<span style="left:62px;top:133.1px;font-size:10.4px;color:#000;line-height:14px;letter-spacing:-0.248px;">High-speed counter</span>
<svg style="left:41.7px;top:131.4px" width="14.8" height="14.8" viewBox="0 0 14 14"><rect x="0.500" y="0.500" width="10.500" height="13" rx="1" fill="#1a1a1a"/><rect x="9" y="6.500" width="4.500" height="7" fill="#111"/><path d="M2.500 4h6.500M2.500 7h6.500M2.500 10h6.500" stroke="#fff" stroke-width="1.200"/></svg>
<div style="left:35px;top:139px;width:7px;height:1px;background:repeating-linear-gradient(to right,#cdcdcd 0,#cdcdcd 1px,transparent 1px,transparent 2px)"></div>
<svg style="left:29px;top:135px" width="5" height="8" viewBox="0 0 5 8"><path d="M0.5 0.8L4 4L0.5 7.2z" fill="#fff" stroke="#a0a0a0" stroke-width="0.8"/></svg>
<span style="left:43.4px;top:149.1px;font-size:10.4px;color:#000;line-height:14px;letter-spacing:-0.278px;">Deleted FB(Empty)</span>
<svg style="left:23.7px;top:147.4px" width="14.8" height="14.8" viewBox="0 0 14 14"><path d="M2 2.500l10 10M12 2.500l-10 10" stroke="#2a4f9c" stroke-width="2.600"/></svg>
<div style="left:13px;top:155px;width:11px;height:1px;background:repeating-linear-gradient(to right,#cdcdcd 0,#cdcdcd 1px,transparent 1px,transparent 2px)"></div>
<div style="left:13px;top:11px;width:1px;height:13px;background:repeating-linear-gradient(to bottom,#cdcdcd 0,#cdcdcd 1px,transparent 1px,transparent 2px)"></div>
<div style="left:13px;top:31px;width:1px;height:124px;background:repeating-linear-gradient(to bottom,#cdcdcd 0,#cdcdcd 1px,transparent 1px,transparent 2px)"></div>
<div style="left:31px;top:35px;width:1px;height:104px;background:repeating-linear-gradient(to bottom,#cdcdcd 0,#cdcdcd 1px,transparent 1px,transparent 2px)"></div>
</div>
<div style="left:236px;top:129.6px;width:1516px;height:434.2px;background:#fff;border:1px solid #bdbdbd"></div>
<div style="left:242px;top:131px;width:123px;height:18px;background:#f6f6f6"></div>
<span style="left:245.3px;top:132.3px;font-size:9.11px;color:#000;line-height:14px;">[000] Pgm000.SRC [3 step] *</span>
<div style="left:366px;top:132px;width:1.4px;height:14px;background:#000"></div>
<span style="left:371.6px;top:132.3px;font-size:9.9px;color:#9a9a9a;line-height:14px;">Memory Monitor 1</span>
<div style="left:457px;top:133px;width:1px;height:13px;background:#a0a0a0"></div>
<svg style="left:1728px;top:133.5px" width="22" height="8" viewBox="0 0 22 8"><path d="M1 2h6l-3 3.4z" fill="#555"/><path d="M13 0.5l7 7M20 0.5l-7 7" stroke="#444" stroke-width="1"/></svg>
<div style="left:239.3px;top:149px;width:1509.6px;height:412px;background:#fff;border:1px solid #a6a6a6;border-top:1.6px solid #7c7c7c;border-left:1.4px solid #8a8a8a"></div>
<div style="left:241px;top:548px;width:800px;height:11px;background:#7e7e7e"></div>
<div style="left:1041px;top:556.8px;width:706px;height:2.2px;background:#727272"></div>
<div style="left:1041px;top:552px;width:706px;height:1px;background:#b4b4b4"></div>
<svg style="left:246.6px;top:158.2px" width="12.4" height="11.8" viewBox="0 0 12.4 11.8"><defs><linearGradient id="lg1" x1="0" y1="0" x2="1" y2="1"><stop offset="0" stop-color="#9fb4d8"/><stop offset="1" stop-color="#1e3f8f"/></linearGradient></defs><rect width="12.4" height="11.8" fill="url(#lg1)"/><rect x="0" y="0" width="2" height="11.8" fill="#c9d3e6"/><circle cx="7" cy="5.6" r="3" fill="none" stroke="#dfe8f7" stroke-width="0.9"/><path d="M7 3v3.2" stroke="#dfe8f7" stroke-width="0.9"/></svg>
<span style="left:261.8px;top:157.7px;font-size:9.05px;color:#b0b0b0;line-height:14px;">[000] Pgm000.SRC [3 step] *</span>
<svg style="left:898px;top:155px" width="90" height="14" viewBox="0 0 90 14"><path d="M4 7.5h8" stroke="#a8a8a8" stroke-width="1"/><rect x="39.5" y="3.5" width="7" height="7" fill="none" stroke="#a8a8a8" stroke-width="1"/><path d="M75.5 3.5l8 8M83.5 3.5l-8 8" stroke="#a0a0a0" stroke-width="1"/></svg>
<div style="left:997px;top:150px;width:40px;height:16px;background:#787878"></div>
<svg style="left:1043px;top:157.5px" width="13" height="10" viewBox="0 0 13 10"><rect x="0.6" y="0.6" width="11.8" height="8.8" rx="1" fill="#1aa6c4" stroke="#2a5bb0" stroke-width="1.2"/><rect x="2.3" y="4.2" width="8.4" height="3.4" fill="#e8f6ff"/><path d="M3.4 5.9h1.6M5.8 5.9h1.6M8.2 5.9h1.6" stroke="#2a5bb0" stroke-width="1.2"/></svg>
<span style="left:1058px;top:157.2px;font-size:9.8px;color:#b0b0b0;line-height:14px;">Memory Monitor 1</span>
<div style="left:247px;top:175.8px;width:546px;height:1.6px;background:#262626"></div>
<div style="left:247px;top:177.4px;width:546px;height:27.6px;background:#e8e8ff"></div>
<div style="left:247px;top:205px;width:546px;height:1px;background:#d6d6d6"></div>
<div style="left:247px;top:232.5px;width:546px;height:1px;background:#c8c8c8"></div>
<div style="left:247px;top:261px;width:546px;height:1px;background:#d0d0d0"></div>
<div style="left:365.0px;top:178px;width:1px;height:83px;background:repeating-linear-gradient(to bottom,#d9d9e2 0,#d9d9e2 1px,transparent 1px,transparent 2px)"></div>
<div style="left:424.2px;top:178px;width:1px;height:83px;background:repeating-linear-gradient(to bottom,#d9d9e2 0,#d9d9e2 1px,transparent 1px,transparent 2px)"></div>
<div style="left:483.4px;top:178px;width:1px;height:83px;background:repeating-linear-gradient(to bottom,#d9d9e2 0,#d9d9e2 1px,transparent 1px,transparent 2px)"></div>
<div style="left:542.6px;top:178px;width:1px;height:83px;background:repeating-linear-gradient(to bottom,#d9d9e2 0,#d9d9e2 1px,transparent 1px,transparent 2px)"></div>
<div style="left:601.8px;top:178px;width:1px;height:83px;background:repeating-linear-gradient(to bottom,#d9d9e2 0,#d9d9e2 1px,transparent 1px,transparent 2px)"></div>
<div style="left:661.0px;top:178px;width:1px;height:83px;background:repeating-linear-gradient(to bottom,#d9d9e2 0,#d9d9e2 1px,transparent 1px,transparent 2px)"></div>
<div style="left:720.2px;top:178px;width:1px;height:83px;background:repeating-linear-gradient(to bottom,#d9d9e2 0,#d9d9e2 1px,transparent 1px,transparent 2px)"></div>
<div style="left:779.4px;top:178px;width:1px;height:83px;background:repeating-linear-gradient(to bottom,#d9d9e2 0,#d9d9e2 1px,transparent 1px,transparent 2px)"></div>
<div style="left:306px;top:205px;width:1.3px;height:57px;background:#555"></div>
<div style="left:301px;top:177.5px;width:5.4px;height:27.5px;background:#ff0000"></div>
<div style="left:307px;top:223.6px;width:486px;height:1.2px;background:#222"></div>
<div style="left:307px;top:251.6px;width:486px;height:1.2px;background:#222"></div>
<div style="left:306px;top:195.6px;width:22px;height:1.2px;background:#111"></div>
<div style="left:327px;top:189.5px;width:1.5px;height:13px;background:#111"></div>
<div style="left:342.5px;top:189.5px;width:1.5px;height:13px;background:#111"></div>
<div style="left:343px;top:195.6px;width:21px;height:1.2px;background:#111"></div>
<span style="left:326px;top:176.3px;font-size:11.6px;color:#111;line-height:14px;transform:scaleX(.8);transform-origin:0 50%;">X25</span>
<div style="left:364.5px;top:177px;width:60.5px;height:28.3px;border:2px solid #00008b"></div>
<div style="left:362.5px;top:193.7px;width:5.5px;height:5px;background:#ff0000"></div>
<span style="left:250px;top:177.5px;font-size:11.6px;color:#2626e0;line-height:14px;transform:scaleX(.82);transform-origin:0 50%;-webkit-text-stroke:.3px #2626e0;">0</span>
<span style="left:250px;top:192.0px;font-size:11.6px;color:#cdb8ea;line-height:14px;transform:scaleX(.82);transform-origin:0 50%;">R.1</span>
<span style="left:250px;top:205.5px;font-size:11.6px;color:#2626e0;line-height:14px;transform:scaleX(.82);transform-origin:0 50%;-webkit-text-stroke:.3px #2626e0;">0</span>
<span style="left:250px;top:220.0px;font-size:11.6px;color:#cdb8ea;line-height:14px;transform:scaleX(.82);transform-origin:0 50%;">R.2</span>
<span style="left:250px;top:233.5px;font-size:11.6px;color:#2626e0;line-height:14px;transform:scaleX(.82);transform-origin:0 50%;-webkit-text-stroke:.3px #2626e0;">1</span>
<span style="left:250px;top:248.0px;font-size:11.6px;color:#cdb8ea;line-height:14px;transform:scaleX(.82);transform-origin:0 50%;">R.3</span>
<div style="left:247px;top:529px;width:546px;height:13px;background:#f0f0f0"></div>
<div style="left:260px;top:529px;width:533px;height:13px;background:#cdcdcd"></div>
<svg style="left:250.6px;top:532.3px" width="4.8" height="6.4" viewBox="0 0 4.8 6.4"><path d="M3.8 0.6L1.2 3.2L3.8 5.8" stroke="#505050" stroke-width="1.5" fill="none"/></svg>
<div style="left:1041px;top:175px;width:706px;height:26.5px;background:#f2f2f2"></div>
<div style="left:1041px;top:201px;width:706px;height:1.4px;background:#8e8e8e"></div>
<div style="left:1088px;top:179.5px;width:40px;height:17.5px;background:#fff;border:1px solid #707070"></div>
<svg style="left:1116.8px;top:186.15px" width="6.4" height="4.8" viewBox="0 0 6.4 4.8"><path d="M0.6 1L3.2 3.6L5.8 1" stroke="#444" stroke-width="1.2" fill="none"/></svg>
<div style="left:1132px;top:179.5px;width:83.5px;height:17.5px;background:#fff;border:1px solid #c8c8c8"></div>
<span style="left:1136px;top:181.4px;font-size:9.6px;color:#7a7a7a;line-height:14px;">INT</span>
<svg style="left:1204.3px;top:186.15px" width="6.4" height="4.8" viewBox="0 0 6.4 4.8"><path d="M0.6 1L3.2 3.6L5.8 1" stroke="#b4b4b4" stroke-width="1.2" fill="none"/></svg>
<div style="left:1220px;top:179.5px;width:84px;height:17.5px;background:#fff;border:1px solid #555"></div>
<span style="left:1224px;top:181.4px;font-size:9.65px;color:#000;line-height:14px;">Ascending Bit</span>
<svg style="left:1292.8px;top:186.15px" width="6.4" height="4.8" viewBox="0 0 6.4 4.8"><path d="M0.6 1L3.2 3.6L5.8 1" stroke="#444" stroke-width="1.2" fill="none"/></svg>
<div style="left:1308px;top:180px;width:92px;height:18px;background:#cccccc;border:1px solid #c4c4c4"></div>
<span style="left:1327px;top:182.6px;font-size:9.6px;color:#a8a8a8;line-height:14px;">D Device Bit</span>
<div style="left:1041px;top:202.2px;width:706px;height:19.6px;background:#fafafc"></div>
<span class="hx" style="left:1082.2px;top:205.5px;width:20px">0</span>
<div style="left:1102.5px;top:204px;width:1px;height:17px;background:#eeeef6"></div>
<span class="hx" style="left:1103.0px;top:205.5px;width:20px">1</span>
<div style="left:1123.3px;top:204px;width:1px;height:17px;background:#eeeef6"></div>
<span class="hx" style="left:1123.8px;top:205.5px;width:20px">2</span>
<div style="left:1144.1px;top:204px;width:1px;height:17px;background:#eeeef6"></div>
<span class="hx" style="left:1144.6px;top:205.5px;width:20px">3</span>
<div style="left:1164.9px;top:204px;width:1px;height:17px;background:#eeeef6"></div>
<span class="hx" style="left:1165.4px;top:205.5px;width:20px">4</span>
<div style="left:1185.7px;top:204px;width:1px;height:17px;background:#eeeef6"></div>
<span class="hx" style="left:1186.2px;top:205.5px;width:20px">5</span>
<div style="left:1206.5px;top:204px;width:1px;height:17px;background:#eeeef6"></div>
<span class="hx" style="left:1207.0px;top:205.5px;width:20px">6</span>
<div style="left:1227.3px;top:204px;width:1px;height:17px;background:#eeeef6"></div>
<span class="hx" style="left:1227.8px;top:205.5px;width:20px">7</span>
<div style="left:1248.1px;top:204px;width:1px;height:17px;background:#eeeef6"></div>
<span class="hx" style="left:1248.6px;top:205.5px;width:20px">8</span>
<div style="left:1268.9px;top:204px;width:1px;height:17px;background:#eeeef6"></div>
<span class="hx" style="left:1269.4px;top:205.5px;width:20px">9</span>
<div style="left:1289.7px;top:204px;width:1px;height:17px;background:#eeeef6"></div>
<span class="hx" style="left:1290.2px;top:205.5px;width:20px">A</span>
<div style="left:1310.5px;top:204px;width:1px;height:17px;background:#eeeef6"></div>
<span class="hx" style="left:1311.0px;top:205.5px;width:20px">B</span>
<div style="left:1331.3px;top:204px;width:1px;height:17px;background:#eeeef6"></div>
<span class="hx" style="left:1331.8px;top:205.5px;width:20px">C</span>
<div style="left:1352.1px;top:204px;width:1px;height:17px;background:#eeeef6"></div>
<span class="hx" style="left:1352.6px;top:205.5px;width:20px">D</span>
<div style="left:1372.9px;top:204px;width:1px;height:17px;background:#eeeef6"></div>
<span class="hx" style="left:1373.4px;top:205.5px;width:20px">E</span>
<div style="left:1393.7px;top:204px;width:1px;height:17px;background:#eeeef6"></div>
<span class="hx" style="left:1394.2px;top:205.5px;width:20px">F</span>
<div style="left:1414.5px;top:204px;width:1px;height:17px;background:#eeeef6"></div>
<span class="hx" style="left:1415px;top:205.5px;width:48px">DEC</span>
<span class="hx" style="left:1462.7px;top:205.5px;width:48px">HEX</span>
<span class="hx" style="left:1511px;top:205.5px;width:48px">ASCII</span>
<div style="left:1463px;top:204px;width:1px;height:17px;background:#eeeef6"></div>
<div style="left:1511px;top:204px;width:1px;height:17px;background:#eeeef6"></div>
<div style="left:1558.6px;top:204px;width:1px;height:17px;background:#eeeef6"></div>
<div class="clip" style="left:1041px;top:222px;width:706px;height:328.5px">
<div style="left:0;top:1.3px;width:373.2px;height:13px;background:repeating-linear-gradient(to right,#c0c0c0 0,#c0c0c0 18.8px,#fff 18.8px,#fff 20.8px);background-position:-20.2px 0"></div>
<span class="gz" style="left:62.0px;top:0.6px">0</span><span class="gz" style="left:82.8px;top:0.6px">0</span><span class="gz" style="left:103.6px;top:0.6px">0</span><span class="gz" style="left:124.4px;top:0.6px">0</span><span class="gz" style="left:145.2px;top:0.6px">0</span><span class="gz" style="left:166.0px;top:0.6px">0</span><span class="gz" style="left:186.8px;top:0.6px">0</span><span class="gz" style="left:207.6px;top:0.6px">0</span><span class="gz" style="left:228.4px;top:0.6px">0</span><span class="gz" style="left:249.2px;top:0.6px">0</span><span class="gz" style="left:270.0px;top:0.6px">0</span><span class="gz" style="left:290.8px;top:0.6px">0</span><span class="gz" style="left:311.6px;top:0.6px">0</span><span class="gz" style="left:332.4px;top:0.6px">0</span><span class="gz" style="left:353.2px;top:0.6px">0</span>
<span class="gz" style="left:388px;top:0.6px">0</span>
<span class="gh" style="left:431.20000000000005px;top:0.6px">H0000</span>
<div style="left:0;top:16.5px;width:373.2px;height:13px;background:repeating-linear-gradient(to right,#c0c0c0 0,#c0c0c0 18.8px,#fff 18.8px,#fff 20.8px);background-position:-20.2px 0"></div>
<span class="gz" style="left:62.0px;top:15.8px">0</span><span class="gz" style="left:82.8px;top:15.8px">0</span><span class="gz" style="left:103.6px;top:15.8px">0</span><span class="gz" style="left:124.4px;top:15.8px">0</span><span class="gz" style="left:145.2px;top:15.8px">0</span><span class="gz" style="left:166.0px;top:15.8px">0</span><span class="gz" style="left:186.8px;top:15.8px">0</span><span class="gz" style="left:207.6px;top:15.8px">0</span><span class="gz" style="left:228.4px;top:15.8px">0</span><span class="gz" style="left:249.2px;top:15.8px">0</span><span class="gz" style="left:270.0px;top:15.8px">0</span><span class="gz" style="left:290.8px;top:15.8px">0</span><span class="gz" style="left:311.6px;top:15.8px">0</span><span class="gz" style="left:332.4px;top:15.8px">0</span><span class="gz" style="left:353.2px;top:15.8px">0</span>
<span class="gz" style="left:388px;top:15.8px">0</span>
<span class="gh" style="left:431.20000000000005px;top:15.8px">H0000</span>
<div style="left:0;top:31.7px;width:373.2px;height:13px;background:repeating-linear-gradient(to right,#c0c0c0 0,#c0c0c0 18.8px,#fff 18.8px,#fff 20.8px);background-position:-20.2px 0"></div>
<span class="gz" style="left:62.0px;top:31.0px">0</span><span class="gz" style="left:82.8px;top:31.0px">0</span><span class="gz" style="left:103.6px;top:31.0px">0</span><span class="gz" style="left:124.4px;top:31.0px">0</span><span class="gz" style="left:145.2px;top:31.0px">0</span><span class="gz" style="left:166.0px;top:31.0px">0</span><span class="gz" style="left:186.8px;top:31.0px">0</span><span class="gz" style="left:207.6px;top:31.0px">0</span><span class="gz" style="left:228.4px;top:31.0px">0</span><span class="gz" style="left:249.2px;top:31.0px">0</span><span class="gz" style="left:270.0px;top:31.0px">0</span><span class="gz" style="left:290.8px;top:31.0px">0</span><span class="gz" style="left:311.6px;top:31.0px">0</span><span class="gz" style="left:332.4px;top:31.0px">0</span><span class="gz" style="left:353.2px;top:31.0px">0</span>
<span class="gz" style="left:388px;top:31.0px">0</span>
<span class="gh" style="left:431.20000000000005px;top:31.0px">H0000</span>
<div style="left:0;top:46.9px;width:373.2px;height:13px;background:repeating-linear-gradient(to right,#c0c0c0 0,#c0c0c0 18.8px,#fff 18.8px,#fff 20.8px);background-position:-20.2px 0"></div>
<span class="gz" style="left:62.0px;top:46.2px">0</span><span class="gz" style="left:82.8px;top:46.2px">0</span><span class="gz" style="left:103.6px;top:46.2px">0</span><span class="gz" style="left:124.4px;top:46.2px">0</span><span class="gz" style="left:145.2px;top:46.2px">0</span><span class="gz" style="left:166.0px;top:46.2px">0</span><span class="gz" style="left:186.8px;top:46.2px">0</span><span class="gz" style="left:207.6px;top:46.2px">0</span><span class="gz" style="left:228.4px;top:46.2px">0</span><span class="gz" style="left:249.2px;top:46.2px">0</span><span class="gz" style="left:270.0px;top:46.2px">0</span><span class="gz" style="left:290.8px;top:46.2px">0</span><span class="gz" style="left:311.6px;top:46.2px">0</span><span class="gz" style="left:332.4px;top:46.2px">0</span><span class="gz" style="left:353.2px;top:46.2px">0</span>
<span class="gz" style="left:388px;top:46.2px">0</span>
<span class="gh" style="left:431.20000000000005px;top:46.2px">H0000</span>
<div style="left:0;top:62.1px;width:373.2px;height:13px;background:repeating-linear-gradient(to right,#c0c0c0 0,#c0c0c0 18.8px,#fff 18.8px,#fff 20.8px);background-position:-20.2px 0"></div>
<span class="gz" style="left:62.0px;top:61.4px">0</span><span class="gz" style="left:82.8px;top:61.4px">0</span><span class="gz" style="left:103.6px;top:61.4px">0</span><span class="gz" style="left:124.4px;top:61.4px">0</span><span class="gz" style="left:145.2px;top:61.4px">0</span><span class="gz" style="left:166.0px;top:61.4px">0</span><span class="gz" style="left:186.8px;top:61.4px">0</span><span class="gz" style="left:207.6px;top:61.4px">0</span><span class="gz" style="left:228.4px;top:61.4px">0</span><span class="gz" style="left:249.2px;top:61.4px">0</span><span class="gz" style="left:270.0px;top:61.4px">0</span><span class="gz" style="left:290.8px;top:61.4px">0</span><span class="gz" style="left:311.6px;top:61.4px">0</span><span class="gz" style="left:332.4px;top:61.4px">0</span><span class="gz" style="left:353.2px;top:61.4px">0</span>
<span class="gz" style="left:388px;top:61.4px">0</span>
<span class="gh" style="left:431.20000000000005px;top:61.4px">H0000</span>
<div style="left:0;top:77.3px;width:373.2px;height:13px;background:repeating-linear-gradient(to right,#c0c0c0 0,#c0c0c0 18.8px,#fff 18.8px,#fff 20.8px);background-position:-20.2px 0"></div>
<span class="gz" style="left:62.0px;top:76.6px">0</span><span class="gz" style="left:82.8px;top:76.6px">0</span><span class="gz" style="left:103.6px;top:76.6px">0</span><span class="gz" style="left:124.4px;top:76.6px">0</span><span class="gz" style="left:145.2px;top:76.6px">0</span><span class="gz" style="left:166.0px;top:76.6px">0</span><span class="gz" style="left:186.8px;top:76.6px">0</span><span class="gz" style="left:207.6px;top:76.6px">0</span><span class="gz" style="left:228.4px;top:76.6px">0</span><span class="gz" style="left:249.2px;top:76.6px">0</span><span class="gz" style="left:270.0px;top:76.6px">0</span><span class="gz" style="left:290.8px;top:76.6px">0</span><span class="gz" style="left:311.6px;top:76.6px">0</span><span class="gz" style="left:332.4px;top:76.6px">0</span><span class="gz" style="left:353.2px;top:76.6px">0</span>
<span class="gz" style="left:388px;top:76.6px">0</span>
<span class="gh" style="left:431.20000000000005px;top:76.6px">H0000</span>
<div style="left:0;top:92.5px;width:373.2px;height:13px;background:repeating-linear-gradient(to right,#c0c0c0 0,#c0c0c0 18.8px,#fff 18.8px,#fff 20.8px);background-position:-20.2px 0"></div>
<span class="gz" style="left:62.0px;top:91.8px">0</span><span class="gz" style="left:82.8px;top:91.8px">0</span><span class="gz" style="left:103.6px;top:91.8px">0</span><span class="gz" style="left:124.4px;top:91.8px">0</span><span class="gz" style="left:145.2px;top:91.8px">0</span><span class="gz" style="left:166.0px;top:91.8px">0</span><span class="gz" style="left:186.8px;top:91.8px">0</span><span class="gz" style="left:207.6px;top:91.8px">0</span><span class="gz" style="left:228.4px;top:91.8px">0</span><span class="gz" style="left:249.2px;top:91.8px">0</span><span class="gz" style="left:270.0px;top:91.8px">0</span><span class="gz" style="left:290.8px;top:91.8px">0</span><span class="gz" style="left:311.6px;top:91.8px">0</span><span class="gz" style="left:332.4px;top:91.8px">0</span><span class="gz" style="left:353.2px;top:91.8px">0</span>
<span class="gz" style="left:388px;top:91.8px">0</span>
<span class="gh" style="left:431.20000000000005px;top:91.8px">H0000</span>
<div style="left:0;top:107.7px;width:373.2px;height:13px;background:repeating-linear-gradient(to right,#c0c0c0 0,#c0c0c0 18.8px,#fff 18.8px,#fff 20.8px);background-position:-20.2px 0"></div>
<span class="gz" style="left:62.0px;top:107.0px">0</span><span class="gz" style="left:82.8px;top:107.0px">0</span><span class="gz" style="left:103.6px;top:107.0px">0</span><span class="gz" style="left:124.4px;top:107.0px">0</span><span class="gz" style="left:145.2px;top:107.0px">0</span><span class="gz" style="left:166.0px;top:107.0px">0</span><span class="gz" style="left:186.8px;top:107.0px">0</span><span class="gz" style="left:207.6px;top:107.0px">0</span><span class="gz" style="left:228.4px;top:107.0px">0</span><span class="gz" style="left:249.2px;top:107.0px">0</span><span class="gz" style="left:270.0px;top:107.0px">0</span><span class="gz" style="left:290.8px;top:107.0px">0</span><span class="gz" style="left:311.6px;top:107.0px">0</span><span class="gz" style="left:332.4px;top:107.0px">0</span><span class="gz" style="left:353.2px;top:107.0px">0</span>
<span class="gz" style="left:388px;top:107.0px">0</span>
<span class="gh" style="left:431.20000000000005px;top:107.0px">H0000</span>
<div style="left:0;top:122.9px;width:373.2px;height:13px;background:repeating-linear-gradient(to right,#c0c0c0 0,#c0c0c0 18.8px,#fff 18.8px,#fff 20.8px);background-position:-20.2px 0"></div>
<span class="gz" style="left:62.0px;top:122.2px">0</span><span class="gz" style="left:82.8px;top:122.2px">0</span><span class="gz" style="left:103.6px;top:122.2px">0</span><span class="gz" style="left:124.4px;top:122.2px">0</span><span class="gz" style="left:145.2px;top:122.2px">0</span><span class="gz" style="left:166.0px;top:122.2px">0</span><span class="gz" style="left:186.8px;top:122.2px">0</span><span class="gz" style="left:207.6px;top:122.2px">0</span><span class="gz" style="left:228.4px;top:122.2px">0</span><span class="gz" style="left:249.2px;top:122.2px">0</span><span class="gz" style="left:270.0px;top:122.2px">0</span><span class="gz" style="left:290.8px;top:122.2px">0</span><span class="gz" style="left:311.6px;top:122.2px">0</span><span class="gz" style="left:332.4px;top:122.2px">0</span><span class="gz" style="left:353.2px;top:122.2px">0</span>
<span class="gz" style="left:388px;top:122.2px">0</span>
<span class="gh" style="left:431.20000000000005px;top:122.2px">H0000</span>
<div style="left:0;top:138.1px;width:373.2px;height:13px;background:repeating-linear-gradient(to right,#c0c0c0 0,#c0c0c0 18.8px,#fff 18.8px,#fff 20.8px);background-position:-20.2px 0"></div>
<span class="gz" style="left:62.0px;top:137.4px">0</span><span class="gz" style="left:82.8px;top:137.4px">0</span><span class="gz" style="left:103.6px;top:137.4px">0</span><span class="gz" style="left:124.4px;top:137.4px">0</span><span class="gz" style="left:145.2px;top:137.4px">0</span><span class="gz" style="left:166.0px;top:137.4px">0</span><span class="gz" style="left:186.8px;top:137.4px">0</span><span class="gz" style="left:207.6px;top:137.4px">0</span><span class="gz" style="left:228.4px;top:137.4px">0</span><span class="gz" style="left:249.2px;top:137.4px">0</span><span class="gz" style="left:270.0px;top:137.4px">0</span><span class="gz" style="left:290.8px;top:137.4px">0</span><span class="gz" style="left:311.6px;top:137.4px">0</span><span class="gz" style="left:332.4px;top:137.4px">0</span><span class="gz" style="left:353.2px;top:137.4px">0</span>
<span class="gz" style="left:388px;top:137.4px">0</span>
<span class="gh" style="left:431.20000000000005px;top:137.4px">H0000</span>
<div style="left:0;top:153.3px;width:373.2px;height:13px;background:repeating-linear-gradient(to right,#c0c0c0 0,#c0c0c0 18.8px,#fff 18.8px,#fff 20.8px);background-position:-20.2px 0"></div>
<span class="gz" style="left:62.0px;top:152.6px">0</span><span class="gz" style="left:82.8px;top:152.6px">0</span><span class="gz" style="left:103.6px;top:152.6px">0</span><span class="gz" style="left:124.4px;top:152.6px">0</span><span class="gz" style="left:145.2px;top:152.6px">0</span><span class="gz" style="left:166.0px;top:152.6px">0</span><span class="gz" style="left:186.8px;top:152.6px">0</span><span class="gz" style="left:207.6px;top:152.6px">0</span><span class="gz" style="left:228.4px;top:152.6px">0</span><span class="gz" style="left:249.2px;top:152.6px">0</span><span class="gz" style="left:270.0px;top:152.6px">0</span><span class="gz" style="left:290.8px;top:152.6px">0</span><span class="gz" style="left:311.6px;top:152.6px">0</span><span class="gz" style="left:332.4px;top:152.6px">0</span><span class="gz" style="left:353.2px;top:152.6px">0</span>
<span class="gz" style="left:388px;top:152.6px">0</span>
<span class="gh" style="left:431.20000000000005px;top:152.6px">H0000</span>
<div style="left:0;top:168.5px;width:373.2px;height:13px;background:repeating-linear-gradient(to right,#c0c0c0 0,#c0c0c0 18.8px,#fff 18.8px,#fff 20.8px);background-position:-20.2px 0"></div>
<span class="gz" style="left:62.0px;top:167.8px">0</span><span class="gz" style="left:82.8px;top:167.8px">0</span><span class="gz" style="left:103.6px;top:167.8px">0</span><span class="gz" style="left:124.4px;top:167.8px">0</span><span class="gz" style="left:145.2px;top:167.8px">0</span><span class="gz" style="left:166.0px;top:167.8px">0</span><span class="gz" style="left:186.8px;top:167.8px">0</span><span class="gz" style="left:207.6px;top:167.8px">0</span><span class="gz" style="left:228.4px;top:167.8px">0</span><span class="gz" style="left:249.2px;top:167.8px">0</span><span class="gz" style="left:270.0px;top:167.8px">0</span><span class="gz" style="left:290.8px;top:167.8px">0</span><span class="gz" style="left:311.6px;top:167.8px">0</span><span class="gz" style="left:332.4px;top:167.8px">0</span><span class="gz" style="left:353.2px;top:167.8px">0</span>
<span class="gz" style="left:388px;top:167.8px">0</span>
<span class="gh" style="left:431.20000000000005px;top:167.8px">H0000</span>
<div style="left:0;top:183.7px;width:373.2px;height:13px;background:repeating-linear-gradient(to right,#c0c0c0 0,#c0c0c0 18.8px,#fff 18.8px,#fff 20.8px);background-position:-20.2px 0"></div>
<span class="gz" style="left:62.0px;top:183.0px">0</span><span class="gz" style="left:82.8px;top:183.0px">0</span><span class="gz" style="left:103.6px;top:183.0px">0</span><span class="gz" style="left:124.4px;top:183.0px">0</span><span class="gz" style="left:145.2px;top:183.0px">0</span><span class="gz" style="left:166.0px;top:183.0px">0</span><span class="gz" style="left:186.8px;top:183.0px">0</span><span class="gz" style="left:207.6px;top:183.0px">0</span><span class="gz" style="left:228.4px;top:183.0px">0</span><span class="gz" style="left:249.2px;top:183.0px">0</span><span class="gz" style="left:270.0px;top:183.0px">0</span><span class="gz" style="left:290.8px;top:183.0px">0</span><span class="gz" style="left:311.6px;top:183.0px">0</span><span class="gz" style="left:332.4px;top:183.0px">0</span><span class="gz" style="left:353.2px;top:183.0px">0</span>
<span class="gz" style="left:388px;top:183.0px">0</span>
<span class="gh" style="left:431.20000000000005px;top:183.0px">H0000</span>
<div style="left:0;top:198.9px;width:373.2px;height:13px;background:repeating-linear-gradient(to right,#c0c0c0 0,#c0c0c0 18.8px,#fff 18.8px,#fff 20.8px);background-position:-20.2px 0"></div>
<span class="gz" style="left:62.0px;top:198.2px">0</span><span class="gz" style="left:82.8px;top:198.2px">0</span><span class="gz" style="left:103.6px;top:198.2px">0</span><span class="gz" style="left:124.4px;top:198.2px">0</span><span class="gz" style="left:145.2px;top:198.2px">0</span><span class="gz" style="left:166.0px;top:198.2px">0</span><span class="gz" style="left:186.8px;top:198.2px">0</span><span class="gz" style="left:207.6px;top:198.2px">0</span><span class="gz" style="left:228.4px;top:198.2px">0</span><span class="gz" style="left:249.2px;top:198.2px">0</span><span class="gz" style="left:270.0px;top:198.2px">0</span><span class="gz" style="left:290.8px;top:198.2px">0</span><span class="gz" style="left:311.6px;top:198.2px">0</span><span class="gz" style="left:332.4px;top:198.2px">0</span><span class="gz" style="left:353.2px;top:198.2px">0</span>
<span class="gz" style="left:388px;top:198.2px">0</span>
<span class="gh" style="left:431.20000000000005px;top:198.2px">H0000</span>
<div style="left:0;top:214.1px;width:373.2px;height:13px;background:repeating-linear-gradient(to right,#c0c0c0 0,#c0c0c0 18.8px,#fff 18.8px,#fff 20.8px);background-position:-20.2px 0"></div>
<span class="gz" style="left:62.0px;top:213.4px">0</span><span class="gz" style="left:82.8px;top:213.4px">0</span><span class="gz" style="left:103.6px;top:213.4px">0</span><span class="gz" style="left:124.4px;top:213.4px">0</span><span class="gz" style="left:145.2px;top:213.4px">0</span><span class="gz" style="left:166.0px;top:213.4px">0</span><span class="gz" style="left:186.8px;top:213.4px">0</span><span class="gz" style="left:207.6px;top:213.4px">0</span><span class="gz" style="left:228.4px;top:213.4px">0</span><span class="gz" style="left:249.2px;top:213.4px">0</span><span class="gz" style="left:270.0px;top:213.4px">0</span><span class="gz" style="left:290.8px;top:213.4px">0</span><span class="gz" style="left:311.6px;top:213.4px">0</span><span class="gz" style="left:332.4px;top:213.4px">0</span><span class="gz" style="left:353.2px;top:213.4px">0</span>
<span class="gz" style="left:388px;top:213.4px">0</span>
<span class="gh" style="left:431.20000000000005px;top:213.4px">H0000</span>
<div style="left:0;top:229.3px;width:373.2px;height:13px;background:repeating-linear-gradient(to right,#c0c0c0 0,#c0c0c0 18.8px,#fff 18.8px,#fff 20.8px);background-position:-20.2px 0"></div>
<span class="gz" style="left:62.0px;top:228.6px">0</span><span class="gz" style="left:82.8px;top:228.6px">0</span><span class="gz" style="left:103.6px;top:228.6px">0</span><span class="gz" style="left:124.4px;top:228.6px">0</span><span class="gz" style="left:145.2px;top:228.6px">0</span><span class="gz" style="left:166.0px;top:228.6px">0</span><span class="gz" style="left:186.8px;top:228.6px">0</span><span class="gz" style="left:207.6px;top:228.6px">0</span><span class="gz" style="left:228.4px;top:228.6px">0</span><span class="gz" style="left:249.2px;top:228.6px">0</span><span class="gz" style="left:270.0px;top:228.6px">0</span><span class="gz" style="left:290.8px;top:228.6px">0</span><span class="gz" style="left:311.6px;top:228.6px">0</span><span class="gz" style="left:332.4px;top:228.6px">0</span><span class="gz" style="left:353.2px;top:228.6px">0</span>
<span class="gz" style="left:388px;top:228.6px">0</span>
<span class="gh" style="left:431.20000000000005px;top:228.6px">H0000</span>
<div style="left:0;top:244.5px;width:373.2px;height:13px;background:repeating-linear-gradient(to right,#c0c0c0 0,#c0c0c0 18.8px,#fff 18.8px,#fff 20.8px);background-position:-20.2px 0"></div>
<span class="gz" style="left:62.0px;top:243.8px">0</span><span class="gz" style="left:82.8px;top:243.8px">0</span><span class="gz" style="left:103.6px;top:243.8px">0</span><span class="gz" style="left:124.4px;top:243.8px">0</span><span class="gz" style="left:145.2px;top:243.8px">0</span><span class="gz" style="left:166.0px;top:243.8px">0</span><span class="gz" style="left:186.8px;top:243.8px">0</span><span class="gz" style="left:207.6px;top:243.8px">0</span><span class="gz" style="left:228.4px;top:243.8px">0</span><span class="gz" style="left:249.2px;top:243.8px">0</span><span class="gz" style="left:270.0px;top:243.8px">0</span><span class="gz" style="left:290.8px;top:243.8px">0</span><span class="gz" style="left:311.6px;top:243.8px">0</span><span class="gz" style="left:332.4px;top:243.8px">0</span><span class="gz" style="left:353.2px;top:243.8px">0</span>
<span class="gz" style="left:388px;top:243.8px">0</span>
<span class="gh" style="left:431.20000000000005px;top:243.8px">H0000</span>
<div style="left:0;top:259.7px;width:373.2px;height:13px;background:repeating-linear-gradient(to right,#c0c0c0 0,#c0c0c0 18.8px,#fff 18.8px,#fff 20.8px);background-position:-20.2px 0"></div>
<span class="gz" style="left:62.0px;top:259.0px">0</span><span class="gz" style="left:82.8px;top:259.0px">0</span><span class="gz" style="left:103.6px;top:259.0px">0</span><span class="gz" style="left:124.4px;top:259.0px">0</span><span class="gz" style="left:145.2px;top:259.0px">0</span><span class="gz" style="left:166.0px;top:259.0px">0</span><span class="gz" style="left:186.8px;top:259.0px">0</span><span class="gz" style="left:207.6px;top:259.0px">0</span><span class="gz" style="left:228.4px;top:259.0px">0</span><span class="gz" style="left:249.2px;top:259.0px">0</span><span class="gz" style="left:270.0px;top:259.0px">0</span><span class="gz" style="left:290.8px;top:259.0px">0</span><span class="gz" style="left:311.6px;top:259.0px">0</span><span class="gz" style="left:332.4px;top:259.0px">0</span><span class="gz" style="left:353.2px;top:259.0px">0</span>
<span class="gz" style="left:388px;top:259.0px">0</span>
<span class="gh" style="left:431.20000000000005px;top:259.0px">H0000</span>
<div style="left:0;top:274.9px;width:373.2px;height:13px;background:repeating-linear-gradient(to right,#c0c0c0 0,#c0c0c0 18.8px,#fff 18.8px,#fff 20.8px);background-position:-20.2px 0"></div>
<span class="gz" style="left:62.0px;top:274.2px">0</span><span class="gz" style="left:82.8px;top:274.2px">0</span><span class="gz" style="left:103.6px;top:274.2px">0</span><span class="gz" style="left:124.4px;top:274.2px">0</span><span class="gz" style="left:145.2px;top:274.2px">0</span><span class="gz" style="left:166.0px;top:274.2px">0</span><span class="gz" style="left:186.8px;top:274.2px">0</span><span class="gz" style="left:207.6px;top:274.2px">0</span><span class="gz" style="left:228.4px;top:274.2px">0</span><span class="gz" style="left:249.2px;top:274.2px">0</span><span class="gz" style="left:270.0px;top:274.2px">0</span><span class="gz" style="left:290.8px;top:274.2px">0</span><span class="gz" style="left:311.6px;top:274.2px">0</span><span class="gz" style="left:332.4px;top:274.2px">0</span><span class="gz" style="left:353.2px;top:274.2px">0</span>
<span class="gz" style="left:388px;top:274.2px">0</span>
<span class="gh" style="left:431.20000000000005px;top:274.2px">H0000</span>
<div style="left:0;top:290.1px;width:373.2px;height:13px;background:repeating-linear-gradient(to right,#c0c0c0 0,#c0c0c0 18.8px,#fff 18.8px,#fff 20.8px);background-position:-20.2px 0"></div>
<span class="gz" style="left:62.0px;top:289.4px">0</span><span class="gz" style="left:82.8px;top:289.4px">0</span><span class="gz" style="left:103.6px;top:289.4px">0</span><span class="gz" style="left:124.4px;top:289.4px">0</span><span class="gz" style="left:145.2px;top:289.4px">0</span><span class="gz" style="left:166.0px;top:289.4px">0</span><span class="gz" style="left:186.8px;top:289.4px">0</span><span class="gz" style="left:207.6px;top:289.4px">0</span><span class="gz" style="left:228.4px;top:289.4px">0</span><span class="gz" style="left:249.2px;top:289.4px">0</span><span class="gz" style="left:270.0px;top:289.4px">0</span><span class="gz" style="left:290.8px;top:289.4px">0</span><span class="gz" style="left:311.6px;top:289.4px">0</span><span class="gz" style="left:332.4px;top:289.4px">0</span><span class="gz" style="left:353.2px;top:289.4px">0</span>
<span class="gz" style="left:388px;top:289.4px">0</span>
<span class="gh" style="left:431.20000000000005px;top:289.4px">H0000</span>
<div style="left:0;top:305.3px;width:373.2px;height:13px;background:repeating-linear-gradient(to right,#c0c0c0 0,#c0c0c0 18.8px,#fff 18.8px,#fff 20.8px);background-position:-20.2px 0"></div>
<span class="gz" style="left:62.0px;top:304.6px">0</span><span class="gz" style="left:82.8px;top:304.6px">0</span><span class="gz" style="left:103.6px;top:304.6px">0</span><span class="gz" style="left:124.4px;top:304.6px">0</span><span class="gz" style="left:145.2px;top:304.6px">0</span><span class="gz" style="left:166.0px;top:304.6px">0</span><span class="gz" style="left:186.8px;top:304.6px">0</span><span class="gz" style="left:207.6px;top:304.6px">0</span><span class="gz" style="left:228.4px;top:304.6px">0</span><span class="gz" style="left:249.2px;top:304.6px">0</span><span class="gz" style="left:270.0px;top:304.6px">0</span><span class="gz" style="left:290.8px;top:304.6px">0</span><span class="gz" style="left:311.6px;top:304.6px">0</span><span class="gz" style="left:332.4px;top:304.6px">0</span><span class="gz" style="left:353.2px;top:304.6px">0</span>
<span class="gz" style="left:388px;top:304.6px">0</span>
<span class="gh" style="left:431.20000000000005px;top:304.6px">H0000</span>
<div style="left:0;top:320.5px;width:373.2px;height:13px;background:repeating-linear-gradient(to right,#c0c0c0 0,#c0c0c0 18.8px,#fff 18.8px,#fff 20.8px);background-position:-20.2px 0"></div>
<span class="gz" style="left:62.0px;top:319.8px">0</span><span class="gz" style="left:82.8px;top:319.8px">0</span><span class="gz" style="left:103.6px;top:319.8px">0</span><span class="gz" style="left:124.4px;top:319.8px">0</span><span class="gz" style="left:145.2px;top:319.8px">0</span><span class="gz" style="left:166.0px;top:319.8px">0</span><span class="gz" style="left:186.8px;top:319.8px">0</span><span class="gz" style="left:207.6px;top:319.8px">0</span><span class="gz" style="left:228.4px;top:319.8px">0</span><span class="gz" style="left:249.2px;top:319.8px">0</span><span class="gz" style="left:270.0px;top:319.8px">0</span><span class="gz" style="left:290.8px;top:319.8px">0</span><span class="gz" style="left:311.6px;top:319.8px">0</span><span class="gz" style="left:332.4px;top:319.8px">0</span><span class="gz" style="left:353.2px;top:319.8px">0</span>
<span class="gz" style="left:388px;top:319.8px">0</span>
<span class="gh" style="left:431.20000000000005px;top:319.8px">H0000</span>
</div>
<div style="left:236.5px;top:568px;width:1515px;height:15px;background:#282828"></div>
<span style="left:239.4px;top:568.8px;font-size:9.6px;color:#9e9e9e;line-height:14px;">Message Window</span>
<svg style="left:1715px;top:571px" width="34" height="10" viewBox="0 0 34 10"><path d="M1 3h6l-3 3.4z" fill="#a8a8a8"/><path d="M14.5 1v4.5M17.5 1v4.5M14.5 1h3M13 5.5h6M16 5.5v3.5" stroke="#a4a4a4" stroke-width="1" fill="none"/><path d="M27 1.5l5.5 5.5M32.5 1.5l-5.5 5.5" stroke="#b4b4b4" stroke-width="1.1"/></svg>
<div style="left:244px;top:590.5px;width:1500px;height:200px;background:#fff;border:1px solid #a2a2a2"></div>
<div style="left:1748.3px;top:586px;width:1px;height:200px;background:#d6d6d6"></div>
<div style="left:239.2px;top:586px;width:1px;height:200px;background:#e6e6e6"></div>
<div style="left:258.6px;top:592.3px;width:1470px;height:14.5px;background:#336699;outline:1px dotted #d8c8a0;outline-offset:-1px"></div>
<div class="clip" style="left:246px;top:592px;width:1482px;height:176.4px">
<div style="left:4.300000000000011px;top:0.8px;width:2.6px;height:7px;background:#1414ee"></div><div style="left:4.300000000000011px;top:9.2px;width:2.6px;height:2.4px;background:#1414ee"></div>
<span style="left:26.30000000000001px;top:1.6px;font-size:9.9px;color:#fff;line-height:14px;letter-spacing:-0.043px;">2023.07.19 15:48:14</span>
<span style="left:138px;top:1.6px;font-size:9.9px;color:#fff;line-height:14px;letter-spacing:-0.043px;">Backupfile [PGM000.1689806888S.SRC] is successfully created.</span>
<div style="left:4.300000000000011px;top:16.0px;width:2.6px;height:7px;background:#1414ee"></div><div style="left:4.300000000000011px;top:24.4px;width:2.6px;height:2.4px;background:#1414ee"></div>
<span style="left:26.30000000000001px;top:16.8px;font-size:9.9px;color:#111;line-height:14px;letter-spacing:-0.043px;">2023.07.19 15:46:25</span>
<span style="left:138px;top:16.8px;font-size:9.9px;color:#111;line-height:14px;letter-spacing:-0.041px;">Stops Monitoring.</span>
<div style="left:4.300000000000011px;top:31.2px;width:2.6px;height:7px;background:#1414ee"></div><div style="left:4.300000000000011px;top:39.6px;width:2.6px;height:2.4px;background:#1414ee"></div>
<span style="left:26.30000000000001px;top:32.0px;font-size:9.9px;color:#111;line-height:14px;letter-spacing:-0.043px;">2023.07.19 15:46:25</span>
<span style="left:138px;top:32.0px;font-size:9.9px;color:#111;line-height:14px;letter-spacing:-0.044px;">CPU connection was closed.</span>
<div style="left:4.300000000000011px;top:46.4px;width:2.6px;height:7px;background:#1414ee"></div><div style="left:4.300000000000011px;top:54.8px;width:2.6px;height:2.4px;background:#1414ee"></div>
<span style="left:26.30000000000001px;top:47.2px;font-size:9.9px;color:#111;line-height:14px;letter-spacing:-0.043px;">2023.07.19 15:42:23</span>
<span style="left:138px;top:47.2px;font-size:9.9px;color:#111;line-height:14px;letter-spacing:-0.039px;">Starts Monitoring.</span>
<div style="left:4.300000000000011px;top:61.6px;width:2.6px;height:7px;background:#1414ee"></div><div style="left:4.300000000000011px;top:70.0px;width:2.6px;height:2.4px;background:#1414ee"></div>
<span style="left:26.30000000000001px;top:62.4px;font-size:9.9px;color:#111;line-height:14px;letter-spacing:-0.043px;">2023.07.19 15:42:23</span>
<span style="left:138px;top:62.4px;font-size:9.9px;color:#111;line-height:14px;letter-spacing:-0.045px;">Operation mode was changed to "Remote RUN".</span>
<div style="left:4.300000000000011px;top:76.8px;width:2.6px;height:7px;background:#1414ee"></div><div style="left:4.300000000000011px;top:85.2px;width:2.6px;height:2.4px;background:#1414ee"></div>
<span style="left:26.30000000000001px;top:77.6px;font-size:9.9px;color:#111;line-height:14px;letter-spacing:-0.043px;">2023.07.19 15:42:15</span>
<span style="left:138px;top:77.6px;font-size:9.9px;color:#111;line-height:14px;letter-spacing:-0.041px;">Card properties reading completed.</span>
<div style="left:4.300000000000011px;top:92.0px;width:2.6px;height:7px;background:#1414ee"></div><div style="left:4.300000000000011px;top:100.4px;width:2.6px;height:2.4px;background:#1414ee"></div>
<span style="left:26.30000000000001px;top:92.8px;font-size:9.9px;color:#111;line-height:14px;letter-spacing:-0.043px;">2023.07.19 15:42:13</span>
<span style="left:138px;top:92.8px;font-size:9.9px;color:#111;line-height:14px;letter-spacing:-0.047px;">Download succeeded.</span>
<div style="left:4.300000000000011px;top:107.2px;width:2.6px;height:7px;background:#1414ee"></div><div style="left:4.300000000000011px;top:115.6px;width:2.6px;height:2.4px;background:#1414ee"></div>
<span style="left:26.30000000000001px;top:108.0px;font-size:9.9px;color:#111;line-height:14px;letter-spacing:-0.043px;">2023.07.19 15:42:06</span>
<span style="left:138px;top:108.0px;font-size:9.9px;color:#111;line-height:14px;letter-spacing:-0.045px;">Parameter download succeeded.</span>
<div style="left:4.300000000000011px;top:122.4px;width:2.6px;height:7px;background:#1414ee"></div><div style="left:4.300000000000011px;top:130.8px;width:2.6px;height:2.4px;background:#1414ee"></div>
<span style="left:26.30000000000001px;top:123.2px;font-size:9.9px;color:#111;line-height:14px;letter-spacing:-0.043px;">2023.07.19 15:42:03</span>
<span style="left:138px;top:123.2px;font-size:9.9px;color:#111;line-height:14px;letter-spacing:-0.045px;">Operation mode was changed to "Remote STOP".</span>
<div style="left:4.300000000000011px;top:137.6px;width:2.6px;height:7px;background:#ff1010"></div><div style="left:4.300000000000011px;top:146.0px;width:2.6px;height:2.4px;background:#ff1010"></div>
<span style="left:26.30000000000001px;top:138.4px;font-size:9.9px;color:#111;line-height:14px;letter-spacing:-0.043px;">2023.07.19 15:42:01</span>
<span style="left:138px;top:138.4px;font-size:9.9px;color:#111;line-height:14px;letter-spacing:-0.043px;">Programs are not matched between PLC and Software. ([001])</span>
<div style="left:4.300000000000011px;top:152.8px;width:2.6px;height:7px;background:#1414ee"></div><div style="left:4.300000000000011px;top:161.2px;width:2.6px;height:2.4px;background:#1414ee"></div>
<span style="left:26.30000000000001px;top:153.6px;font-size:9.9px;color:#111;line-height:14px;letter-spacing:-0.043px;">2023.07.19 15:42:01</span>
<span style="left:138px;top:153.6px;font-size:9.9px;color:#111;line-height:14px;letter-spacing:-0.045px;">Connection established with CPU. (USB : REMOTE RUN)</span>
<div style="left:4.300000000000011px;top:168.0px;width:2.6px;height:7px;background:#1414ee"></div><div style="left:4.300000000000011px;top:176.4px;width:2.6px;height:2.4px;background:#1414ee"></div>
<span style="left:26.30000000000001px;top:168.8px;font-size:9.9px;color:#111;line-height:14px;letter-spacing:-0.043px;">2023.07.19 15:42:00</span>
<span style="left:138px;top:168.8px;font-size:9.9px;color:#111;line-height:14px;letter-spacing:-0.044px;">Backupfile [PGM000.1689806518S.SRCBUFF] is successfully created.</span>
</div>
<div style="left:1728.5px;top:592px;width:14px;height:177px;background:#f0f0f0"></div>
<div style="left:1728.5px;top:606px;width:14px;height:49px;background:#cdcdcd"></div>
<svg style="left:1732.3px;top:596.6px" width="6.4" height="4.8" viewBox="0 0 6.4 4.8"><path d="M0.6 3.8L3.2 1.2L5.8 3.8" stroke="#505050" stroke-width="1.5" fill="none"/></svg>
<svg style="left:1732.3px;top:757.6px" width="6.4" height="4.8" viewBox="0 0 6.4 4.8"><path d="M0.6 1L3.2 3.6L5.8 1" stroke="#505050" stroke-width="1.5" fill="none"/></svg>
<div style="left:246px;top:768.4px;width:1497px;height:12px;background:#f0f0f0"></div>
<div style="left:259px;top:768.4px;width:1413.5px;height:12px;background:#cdcdcd"></div>
<svg style="left:250.6px;top:771.8px" width="4.8" height="6.4" viewBox="0 0 4.8 6.4"><path d="M3.8 0.6L1.2 3.2L3.8 5.8" stroke="#505050" stroke-width="1.5" fill="none"/></svg>
<svg style="left:1718.8999999999999px;top:771.8px" width="4.8" height="6.4" viewBox="0 0 4.8 6.4"><path d="M1 0.6L3.6 3.2L1 5.8" stroke="#505050" stroke-width="1.5" fill="none"/></svg>
<div style="left:1756px;top:130px;width:291.5px;height:15.4px;background:#282828"></div>
<span style="left:1758.5px;top:130.6px;font-size:9.6px;color:#9e9e9e;line-height:14px;">Variable Editor</span>
<svg style="left:2012px;top:133px" width="34" height="10" viewBox="0 0 34 10"><path d="M1 3h6l-3 3.4z" fill="#a8a8a8"/><path d="M13.5 1v4.5M16.5 1v4.5M13.5 1h3M12 5.5h6M15 5.5v3.5" stroke="#a4a4a4" stroke-width="1" fill="none"/><path d="M26 1.5l5.5 5.5M31.5 1.5l-5.5 5.5" stroke="#b4b4b4" stroke-width="1.1"/></svg>
<div style="left:1759.3px;top:150.6px;width:143.4px;height:18.2px;background:#fff;border:1px solid #7c7c7c"></div>
<svg style="left:1892.6px;top:157.9px" width="6.4" height="4.8" viewBox="0 0 6.4 4.8"><path d="M0.6 1L3.2 3.6L5.8 1" stroke="#707070" stroke-width="1.1" fill="none"/></svg>
<div style="left:1911px;top:150px;width:51px;height:15.6px;background:#cfe5f8;border:1px solid #0078d7"></div>
<span style="left:1915px;top:151.0px;font-size:9.66px;color:#000;line-height:14px;">Search(S)</span>
<div style="left:1756px;top:191.5px;width:284px;height:600px;background:#fff;border:1px solid #e2e2e2"></div>
<div style="left:1756px;top:173.7px;width:52.5px;height:19px;background:#fff;border:1px solid #dcdcdc;border-bottom:none"></div>
<span style="left:1760px;top:175.4px;font-size:9.34px;color:#000;line-height:14px;">All device</span>
<div style="left:1759.5px;top:193.8px;width:276.5px;height:583.5px;background:#a5a5a5"></div>
<div style="left:1759.5px;top:193.8px;width:52.0px;height:17px;background:#f3f3f3;border-right:1px solid #8c8c8c;border-bottom:1px solid #8c8c8c;border-top:1px solid #fff;border-left:1px solid #fff"></div>
<div style="left:1811.5px;top:193.8px;width:64.09999999999991px;height:17px;background:#f3f3f3;border-right:1px solid #8c8c8c;border-bottom:1px solid #8c8c8c;border-top:1px solid #fff;border-left:1px solid #fff"></div>
<div style="left:1875.6px;top:193.8px;width:48.0px;height:17px;background:#f3f3f3;border-right:1px solid #8c8c8c;border-bottom:1px solid #8c8c8c;border-top:1px solid #fff;border-left:1px solid #fff"></div>
<div style="left:1923.6px;top:193.8px;width:62.40000000000009px;height:17px;background:#f3f3f3;border-right:1px solid #8c8c8c;border-bottom:1px solid #8c8c8c;border-top:1px solid #fff;border-left:1px solid #fff"></div>
<span style="left:1819.7px;top:196.0px;font-size:9.39px;color:#000;line-height:14px;">Description</span>
<span style="left:1883px;top:196.0px;font-size:9.4px;color:#000;line-height:14px;">Variable</span>
<span style="left:1927px;top:196.0px;font-size:9.4px;color:#000;line-height:14px;">Type</span>
<div style="left:793px;top:166.9px;width:320px;height:453.6px;background:#fff"></div>
<div style="left:797.3px;top:191.2px;width:311.7px;height:425.3px;background:#f3f3f3"></div>
<span style="left:799.5px;top:173.6px;font-size:9.6px;color:#a8a8a8;line-height:14px;">Instruction</span>
<svg style="left:1089px;top:173.5px" width="10" height="10" viewBox="0 0 10 10"><path d="M0.7 0.7l8.6 8.6M9.3 0.7l-8.6 8.6" stroke="#8c8c8c" stroke-width="1"/></svg>
<div style="left:805px;top:204px;width:298.5px;height:117.6px;border:1px solid #e0e0e0"></div>
<div style="left:809px;top:202px;width:78px;height:5px;background:#f3f3f3"></div>
<span style="left:811px;top:198.0px;font-size:10.2px;color:#000;line-height:14px;">Input Instruction</span>
<span style="left:811px;top:219.5px;font-size:10.2px;color:#000;line-height:14px;">Instruction:</span>
<div style="left:866px;top:217px;width:151px;height:17.5px;background:#fff;border:1px solid #7a7a7a"></div>
<svg style="left:1007.3px;top:223.6px" width="6.4" height="4.8" viewBox="0 0 6.4 4.8"><path d="M0.6 1L3.2 3.6L5.8 1" stroke="#444" stroke-width="1.2" fill="none"/></svg>
<div style="left:862.4px;top:214.8px;width:143.3px;height:21px;background:#fff;border:3px solid #e81123"></div>
<span style="left:869px;top:218.4px;font-size:10.6px;color:#000;line-height:14px;letter-spacing:-0.564px;">ADD X20 D20 D30</span>
<div style="left:1020px;top:216.5px;width:37.5px;height:17.8px;background:#e1e1e1;border:1px solid #adadad"></div>
<span style="left:1020px;top:218.7px;width:37.5px;text-align:center;font-size:10px;line-height:14px;color:#000">Search</span>
<div style="left:1061px;top:216.5px;width:37.5px;height:17.8px;background:#e1e1e1;border:1px solid #adadad"></div>
<span style="left:1061px;top:218.7px;width:37.5px;text-align:center;font-size:10px;line-height:14px;color:#000">Help</span>
<div style="left:805.5px;top:245px;width:142.5px;height:72.5px;background:#fff"></div>
<div style="left:955px;top:245px;width:143px;height:72.5px;background:#fff"></div>
<span style="left:810px;top:246.0px;font-size:10px;color:#000;line-height:14px;letter-spacing:-0.571px;">All</span>
<span style="left:810px;top:260.4px;font-size:10px;color:#000;line-height:14px;letter-spacing:-0.094px;">Contact</span>
<span style="left:810px;top:274.9px;font-size:10px;color:#000;line-height:14px;letter-spacing:0.247px;">Output</span>
<span style="left:810px;top:289.4px;font-size:10px;color:#000;line-height:14px;letter-spacing:-0.141px;">Master Control</span>
<span style="left:810px;top:303.8px;font-size:10px;color:#000;line-height:14px;letter-spacing:-0.035px;">Termination</span>
<span style="left:960px;top:246.0px;font-size:10px;color:#000;line-height:14px;letter-spacing:-0.788px;">ABRST</span>
<span style="left:960px;top:260.4px;font-size:10px;color:#000;line-height:14px;letter-spacing:-1.035px;">ACOS</span>
<span style="left:960px;top:274.9px;font-size:10px;color:#000;line-height:14px;letter-spacing:-1.002px;">ACOSP</span>
<span style="left:960px;top:289.4px;font-size:10px;color:#000;line-height:14px;letter-spacing:-0.705px;">ADD</span>
<span style="left:960px;top:303.8px;font-size:10px;color:#000;line-height:14px;letter-spacing:-0.946px;">ADDP</span>
<div style="left:935.2px;top:245px;width:13.5px;height:72.5px;background:#f0f0f0"></div>
<div style="left:935.2px;top:258.5px;width:13.5px;height:12.5px;background:#cdcdcd"></div>
<svg style="left:938.8px;top:249.6px" width="6.4" height="4.8" viewBox="0 0 6.4 4.8"><path d="M0.6 3.8L3.2 1.2L5.8 3.8" stroke="#505050" stroke-width="1.5" fill="none"/></svg>
<svg style="left:938.8px;top:307.6px" width="6.4" height="4.8" viewBox="0 0 6.4 4.8"><path d="M0.6 1L3.2 3.6L5.8 1" stroke="#505050" stroke-width="1.5" fill="none"/></svg>
<div style="left:1082.9px;top:245px;width:13.5px;height:72.5px;background:#f0f0f0"></div>
<div style="left:1082.9px;top:258.5px;width:13.5px;height:12.5px;background:#cdcdcd"></div>
<svg style="left:1086.5px;top:249.6px" width="6.4" height="4.8" viewBox="0 0 6.4 4.8"><path d="M0.6 3.8L3.2 1.2L5.8 3.8" stroke="#505050" stroke-width="1.5" fill="none"/></svg>
<svg style="left:1086.5px;top:307.6px" width="6.4" height="4.8" viewBox="0 0 6.4 4.8"><path d="M0.6 1L3.2 3.6L5.8 1" stroke="#505050" stroke-width="1.5" fill="none"/></svg>
<div style="left:805px;top:329.5px;width:298.5px;height:135px;border:1px solid #e0e0e0"></div>
<div style="left:809px;top:327.5px;width:56px;height:5px;background:#f3f3f3"></div>
<span style="left:811px;top:323.5px;font-size:10.2px;color:#000;line-height:14px;">Information</span>
<span style="left:809.7px;top:344.0px;font-size:10px;color:#000;line-height:14px;">Format:</span>
<div style="left:847.5px;top:340.5px;width:249.3px;height:18.2px;background:#f3f3f3;border:1px solid #6a6a6a;box-shadow:inset -1px -1px 0 #fff"></div>
<span style="left:849.5px;top:343.0px;font-size:10px;color:#000;line-height:14px;">ADD S1(W) S2(W) D(W)</span>
<span style="left:810px;top:368.0px;font-size:10px;color:#000;line-height:14px;">Desc:</span>
<div style="left:847.5px;top:364px;width:249.3px;height:57.3px;background:#f3f3f3;border:1px solid #6a6a6a;box-shadow:inset -1px -1px 0 #fff"></div>
<span style="left:849.5px;top:364.2px;font-size:9.94px;color:#000;line-height:14px;">Adds Data S1 To Data S2, And Stores The Result In</span>
<span style="left:849.5px;top:374.8px;font-size:9.94px;color:#000;line-height:14px;">Device D.</span>
<span style="left:811px;top:424.0px;font-size:10px;color:#000;line-height:14px;">Result:</span>
<div style="left:847.5px;top:425.7px;width:250.3px;height:36px;background:#fff;border:1px solid #333"></div>
<div style="left:857px;top:432.8px;width:167px;height:22px;background:#fff;border:1px solid #222"></div>
<div style="left:851px;top:440px;width:6px;height:1px;background:#222"></div>
<div style="left:1024px;top:440px;width:5.5px;height:1px;background:#222"></div>
<span style="left:884.5px;top:434.0px;font-size:7.6px;color:#111;line-height:14px;">ADD</span>
<span style="left:932.6px;top:434.0px;font-size:7.6px;color:#111;line-height:14px;">X20</span>
<span style="left:965.5px;top:434.0px;font-size:7.6px;color:#111;line-height:14px;">D20</span>
<span style="left:997px;top:434.0px;font-size:7.6px;color:#000;line-height:14px;font-weight:bold;">D30</span>
<div style="left:805px;top:469.6px;width:298.5px;height:118px;border:1px solid #e0e0e0"></div>
<div style="left:809px;top:467.6px;width:42px;height:5px;background:#f3f3f3"></div>
<span style="left:811px;top:463.6px;font-size:10.2px;color:#000;line-height:14px;">Operand</span>
<span style="left:845px;top:481.2px;width:27.5px;text-align:right;font-size:10px;line-height:14px;color:#000">(S1)</span>
<div style="left:875.4px;top:478px;width:47.4px;height:17.8px;background:#fff;border:1px solid #707070"></div>
<span style="left:879px;top:481.2px;font-size:10px;color:#000;line-height:14px;">X</span>
<svg style="left:912.3px;top:484.8px" width="6.4" height="4.8" viewBox="0 0 6.4 4.8"><path d="M0.6 1L3.2 3.6L5.8 1" stroke="#555" stroke-width="1.2" fill="none"/></svg>
<div style="left:925.8px;top:478px;width:53px;height:19px;background:#fff;border:1px solid #abadb3"></div>
<span style="left:930.5px;top:480.6px;font-size:10px;color:#000;line-height:14px;">20</span>
<span style="left:845px;top:502.2px;width:27.5px;text-align:right;font-size:10px;line-height:14px;color:#000">(S2)</span>
<div style="left:875.4px;top:499px;width:47.4px;height:17.8px;background:#fff;border:1px solid #707070"></div>
<span style="left:879px;top:502.2px;font-size:10px;color:#000;line-height:14px;">D</span>
<svg style="left:912.3px;top:505.8px" width="6.4" height="4.8" viewBox="0 0 6.4 4.8"><path d="M0.6 1L3.2 3.6L5.8 1" stroke="#555" stroke-width="1.2" fill="none"/></svg>
<div style="left:925.8px;top:499px;width:53px;height:19px;background:#fff;border:1px solid #abadb3"></div>
<span style="left:930.5px;top:501.6px;font-size:10px;color:#000;line-height:14px;">20</span>
<span style="left:845px;top:523.2px;width:27.5px;text-align:right;font-size:10px;line-height:14px;color:#000">(D)</span>
<div style="left:875.4px;top:520px;width:47.4px;height:17.8px;background:#fff;border:1px solid #707070"></div>
<span style="left:879px;top:523.2px;font-size:10px;color:#000;line-height:14px;">D</span>
<svg style="left:912.3px;top:526.8000000000001px" width="6.4" height="4.8" viewBox="0 0 6.4 4.8"><path d="M0.6 1L3.2 3.6L5.8 1" stroke="#555" stroke-width="1.2" fill="none"/></svg>
<div style="left:925.8px;top:520px;width:53px;height:19px;background:#fff;border:1px solid #abadb3"></div>
<span style="left:930.5px;top:522.6px;font-size:10px;color:#000;line-height:14px;">30</span>
<div style="left:805px;top:593.7px;width:64px;height:18px;background:#e1e1e1;border:1px solid #adadad"></div>
<span style="left:805px;top:596.0px;width:64px;text-align:center;font-size:10px;line-height:14px;color:#000">Basic</span>
<div style="left:883.2px;top:593.7px;width:64px;height:18px;background:#cccccc;border:1px solid #bfbfbf"></div>
<span style="left:883.2px;top:596.0px;width:64px;text-align:center;font-size:10px;line-height:14px;color:#a0a0a0">Input Helper</span>
<div style="left:960px;top:591.4px;width:68.6px;height:22.6px;border:3px solid #e81123"></div>
<div style="left:963px;top:594px;width:62.6px;height:17.4px;background:#e1e1e1;border:1px solid #adadad"></div>
<span style="left:963px;top:596.0px;width:62.6px;text-align:center;font-size:10px;line-height:14px;color:#000">OK</span>
<div style="left:1040px;top:593.7px;width:64px;height:18px;background:#e1e1e1;border:1px solid #adadad"></div>
<span style="left:1040px;top:596.0px;width:64px;text-align:center;font-size:10px;line-height:14px;color:#000">Cancel</span>
</body></html>
